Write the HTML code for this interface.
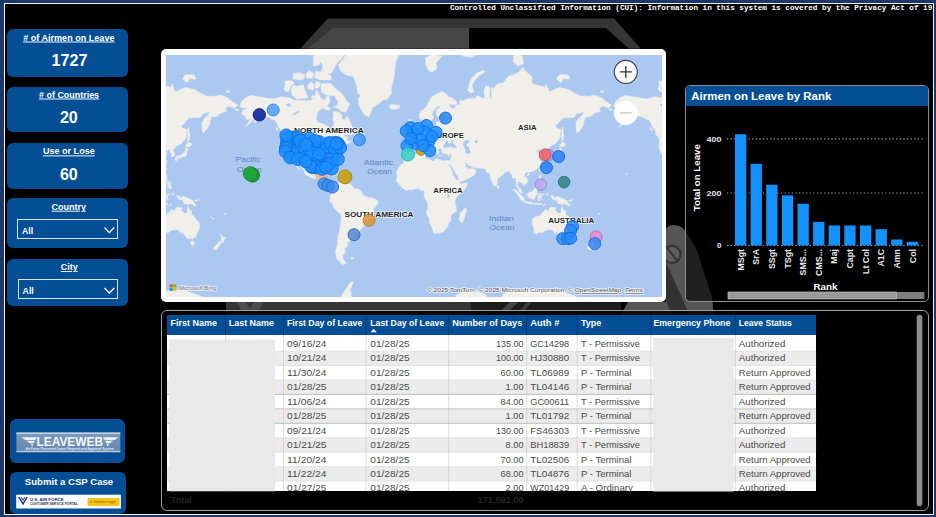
<!DOCTYPE html>
<html lang="en"><head><meta charset="utf-8"><title>Airmen on Leave Dashboard</title>
<style>
html,body{margin:0;padding:0;background:#1d3768;}
body{width:936px;height:517px;overflow:hidden;position:relative;font-family:"Liberation Sans", Arial, Helvetica, sans-serif;}
#frame{position:absolute;left:4px;top:3px;width:930px;height:512px;box-sizing:border-box;border:1px solid #eef1f6;background:#000;overflow:hidden;}
.abs{position:absolute;}
.card{position:absolute;background:#034e95;border-radius:6px;}
.sel{position:absolute;border:1px solid #d9e2ef;box-sizing:border-box;}
#ov{position:absolute;left:0;top:0;pointer-events:none;font-family:"Liberation Sans", Arial, Helvetica, sans-serif;}
svg text{white-space:pre;}
</style></head><body>
<div id="frame"></div>
<svg class="abs" style="left:0;top:0" width="936" height="517" viewBox="0 0 936 517">
<defs><filter id="bgs"><feGaussianBlur stdDeviation="0.6"/></filter></defs>
<g filter="url(#bgs)">
<polygon points="328,18.5 614,18.5 641,48.7 300,48.7" fill="#343434"/>
<polygon points="332.4,28 606,28 629,48.7 306.7,48.7" fill="#000"/>
<polygon points="332.4,28 469,28 469,48.7 306.7,48.7" fill="#454545"/>
<rect x="226" y="302" width="245" height="14" fill="#363636"/>
<rect x="471" y="302" width="150" height="14" fill="#1c1c1c"/>
<polygon points="236,302 246,302 250,309 254,302 264,302 255,316 245,316" fill="#4e4e4e"/>
<polygon points="496,316 510,302 518,302 504,316" fill="#444"/><polygon points="515,316 527,302 532,302 520,316" fill="#3a3a3a"/>
<path d="M666,229 C668,223.500 680,223.500 684.500,230 C690,238 694,244 697,251 L712,297 L714,316 L620,316 L628,302 L666,302Z" fill="#545454"/>
<polygon points="666,262 690,316 672,316 666,300" fill="#333"/>
<circle cx="672" cy="254.500" r="8.6" fill="#5e5e5e" stroke="#343434" stroke-width="2.2"/>
<path d="M667 247.500 L677.500 261" stroke="#343434" stroke-width="2"/>
</g></svg>
<div class="card" style="left:7.4px;top:29.4px;width:121.0px;height:47.6px"></div>
<div class="card" style="left:7.4px;top:86.6px;width:121.0px;height:45.7px"></div>
<div class="card" style="left:7.4px;top:143px;width:121.0px;height:46.2px"></div>
<div class="card" style="left:7.4px;top:198.1px;width:121.0px;height:50.4px"></div>
<div class="card" style="left:7.4px;top:258.5px;width:121.0px;height:47.5px"></div>
<div class="card" style="left:10px;top:419.3px;width:115.4px;height:43.5px"></div>
<div class="card" style="left:10px;top:472px;width:116.0px;height:42.0px"></div>
<div class="sel" style="left:17.4px;top:219px;width:101px;height:20px"></div>
<div class="sel" style="left:18.4px;top:279.4px;width:100px;height:20px"></div>
<div class="abs" style="left:160.6px;top:48.7px;width:505.9px;height:253.8px;background:#fff;border-radius:5px"></div>
<svg class="abs" style="left:166.0px;top:54.5px;font-family:"Liberation Sans", Arial, Helvetica, sans-serif" width="496.0" height="242.5" viewBox="0 0 496.0 242.5">
<defs><filter id="soft" x="-2%" y="-2%" width="104%" height="104%"><feGaussianBlur stdDeviation="0.7"/></filter></defs>
<rect width="496.0" height="242.5" fill="#abc8f1"/>
<g filter="url(#soft)"><path d="M73.7 51.2L75.7 46.5L79.9 42.8L85.6 40.2L92.4 41.7L101.7 43.3L107.9 43.9L115.2 41.7L119.4 42.8L123.5 42.8L128.7 45.5L136.0 45.5L144.3 45.5L147.4 44.1L149.0 41.4L150.5 34.5L152.6 38.5L154.7 42.8L158.9 45.5L160.4 41.4L163.0 41.1L164.0 46.8L162.0 49.7L158.9 51.2L157.3 53.3L153.7 54.5L151.6 57.3L150.0 63.7L152.1 67.6L156.8 68.5L159.9 70.7L162.5 71.3L163.0 74.8L164.6 77.7L166.1 76.9L166.3 72.2L168.5 68.5L166.9 64.7L167.7 60.6L167.2 56.7L171.8 56.7L175.5 59.5L176.0 64.1L178.6 65.1L181.2 61.0L183.8 66.6L185.9 71.3L189.0 74.8L190.2 76.9L187.4 78.2L185.9 79.5L179.1 79.5L176.5 83.0L179.6 81.4L181.4 81.8L180.7 84.5L182.2 86.1L184.3 86.4L185.9 85.3L184.8 87.1L181.7 88.6L179.6 89.6L180.2 87.5L178.6 87.8L175.5 89.6L174.6 91.6L175.5 92.3L171.5 93.6L171.3 95.3L169.8 97.3L169.2 98.6L169.6 100.8L167.2 102.5L164.0 105.5L163.7 107.3L165.1 110.9L164.8 112.8L163.5 112.6L162.3 109.7L160.9 107.3L158.9 106.8L155.7 106.9L155.2 108.3L153.7 108.1L150.5 107.8L147.4 109.7L147.1 112.0L146.6 116.0L148.5 119.7L150.0 120.8L152.6 120.2L154.2 117.7L157.8 117.1L157.3 120.4L156.3 123.2L158.9 123.3L161.7 124.2L161.2 126.9L161.5 129.0L163.5 130.6L165.6 130.1L167.7 130.9L167.3 132.3L165.1 132.4L162.0 131.3L159.2 129.6L157.3 126.4L153.7 125.3L150.5 122.9L147.4 123.4L144.3 122.1L139.6 119.6L138.6 118.2L138.8 116.6L137.0 114.0L134.4 111.2L131.3 107.9L130.3 105.5L128.9 105.1L129.0 107.3L131.1 110.3L133.4 114.0L134.4 115.4L131.8 113.4L129.5 109.9L127.9 106.9L126.5 104.3L125.1 102.4L122.9 101.8L121.5 98.8L120.9 97.5L119.4 94.2L119.1 90.4L119.4 85.8L118.7 82.4L120.4 82.5L120.4 81.1L116.3 78.2L114.7 74.8L112.8 72.2L111.1 68.5L109.0 65.1L105.9 64.3L102.8 62.0L98.6 61.2L94.4 61.0L90.8 63.0L91.3 59.5L88.2 63.0L85.1 67.0L82.0 70.0L78.9 71.7L80.9 69.5L84.1 65.1L84.9 64.1L79.9 64.3L79.9 61.6L76.8 59.9L75.7 58.0L77.3 55.0L80.9 54.5L80.9 52.9L76.8 52.9L73.7 51.2Z M447.7 51.2L449.7 46.5L453.9 42.8L459.6 40.2L466.4 41.7L475.7 43.3L482.0 43.9L489.2 41.7L493.4 42.8L497.5 42.8L502.7 45.5L510.0 45.5L518.3 45.5L521.4 44.1L523.0 41.4L524.5 34.5L526.6 38.5L528.7 42.8L532.9 45.5L534.4 41.4L537.0 41.1L538.0 46.8L536.0 49.7L532.9 51.2L531.3 53.3L527.7 54.5L525.6 57.3L524.0 63.7L526.1 67.6L530.8 68.5L533.9 70.7L536.5 71.3L537.0 74.8L538.6 77.7L540.1 76.9L540.3 72.2L542.5 68.5L540.9 64.7L541.7 60.6L541.2 56.7L545.8 56.7L549.5 59.5L550.0 64.1L552.6 65.1L555.2 61.0L557.8 66.6L559.9 71.3L563.0 74.8L564.2 76.9L561.4 78.2L559.9 79.5L553.1 79.5L550.5 83.0L553.6 81.4L555.4 81.8L554.7 84.5L556.2 86.1L558.3 86.4L559.9 85.3L558.8 87.1L555.7 88.6L553.6 89.6L554.2 87.5L552.6 87.8L549.5 89.6L548.6 91.6L549.5 92.3L545.5 93.6L545.3 95.3L543.8 97.3L543.2 98.6L543.6 100.8L541.2 102.5L538.0 105.5L537.7 107.3L539.1 110.9L538.8 112.8L537.5 112.6L536.3 109.7L534.9 107.3L532.9 106.8L529.7 106.9L529.2 108.3L527.7 108.1L524.5 107.8L521.4 109.7L521.1 112.0L520.6 116.0L522.5 119.7L524.0 120.8L526.6 120.2L528.2 117.7L531.8 117.1L531.3 120.4L530.3 123.2L532.9 123.3L535.7 124.2L535.2 126.9L535.5 129.0L537.5 130.6L539.6 130.1L541.7 130.9L541.3 132.3L539.1 132.4L536.0 131.3L533.2 129.6L531.3 126.4L527.7 125.3L524.5 122.9L521.4 123.4L518.3 122.1L513.6 119.6L512.6 118.2L512.8 116.6L511.0 114.0L508.4 111.2L505.3 107.9L504.3 105.5L502.9 105.1L503.0 107.3L505.1 110.3L507.4 114.0L508.4 115.4L505.8 113.4L503.5 109.9L501.9 106.9L500.5 104.3L499.1 102.4L496.9 101.8L495.5 98.8L494.9 97.5L493.4 94.2L493.1 90.4L493.4 85.8L492.7 82.4L494.4 82.5L494.4 81.1L490.3 78.2L488.7 74.8L486.8 72.2L485.1 68.5L483.0 65.1L479.9 64.3L476.8 62.0L472.6 61.2L468.4 61.0L464.8 63.0L465.3 59.5L462.2 63.0L459.1 67.0L456.0 70.0L452.9 71.7L454.9 69.5L458.1 65.1L458.9 64.1L453.9 64.3L453.9 61.6L450.8 59.9L449.7 58.0L451.3 55.0L454.9 54.5L454.9 52.9L450.8 52.9L447.7 51.2Z M179.6 57.5L174.4 55.7L171.3 52.9L167.2 52.4L171.3 50.3L172.4 46.8L168.2 40.5L163.0 40.5L159.4 39.4L155.2 37.0L155.2 29.0L159.9 28.3L165.1 28.6L167.2 31.3L171.3 34.9L175.5 38.5L178.1 41.9L181.7 47.3L184.3 48.8L182.2 52.1L180.7 55.3L179.6 57.5Z M142.2 42.8L136.0 43.6L130.8 44.1L126.6 40.5L125.1 35.5L126.6 30.6L131.8 31.3L137.0 29.6L139.6 37.0L142.2 42.8Z M117.8 33.9L120.4 36.7L123.2 35.5L124.6 31.3L127.7 28.6L126.6 26.1L122.5 25.4L118.9 26.5L119.4 30.6L117.8 33.9Z M491.8 33.9L494.4 36.7L497.2 35.5L498.6 31.3L501.7 28.6L500.6 26.1L496.5 25.4L492.9 26.5L493.4 30.6L491.8 33.9Z M126.6 23.6L133.9 25.1L138.1 23.6L138.6 19.7L133.9 17.7L127.7 18.5L126.6 23.6Z M140.2 22.8L146.4 23.6L147.9 18.5L143.3 15.6L140.2 18.5Z M142.2 33.9L147.4 34.9L147.9 29.0L144.8 27.2L141.7 30.0Z M149.0 32.9L152.6 32.9L154.7 27.9L150.5 26.5L149.0 29.6Z M148.5 22.4L154.7 25.1L165.1 24.7L165.1 20.9L156.8 16.9L149.5 16.4Z M154.7 18.5L165.1 18.5L168.2 13.4L170.3 8.8L175.5 3.9L180.7 -4.4L185.9 -14.0L170.3 -21.4L154.7 -10.7L152.6 1.2L156.8 11.2L154.7 18.5Z M147.4 11.2L152.6 9.8L156.8 3.9L152.6 -6.2L147.4 1.2L147.4 11.2Z M157.8 53.7L160.9 55.0L164.6 54.5L163.5 52.5L160.4 50.7L157.8 53.7Z M144.8 42.8L148.5 43.9L149.0 41.4L146.4 40.0L144.8 42.8Z M203.0 61.8L198.3 59.5L195.2 54.5L192.6 49.3L192.6 42.8L195.2 40.5L191.6 38.5L191.1 32.3L187.9 21.7L179.6 19.7L174.4 15.6L172.4 9.8L177.6 3.9L182.8 -7.5L201.4 -21.4L222.2 -17.6L235.7 -7.5L229.5 7.4L228.5 17.7L227.4 25.4L225.3 32.3L225.3 39.1L221.2 44.1L217.0 45.0L213.9 48.1L209.8 50.7L206.6 52.1L205.6 55.3L204.0 59.5L203.0 61.8Z M223.3 51.2L225.3 49.5L229.5 49.9L233.1 50.3L234.2 52.1L232.6 53.3L229.0 54.6L224.8 53.8L223.3 51.2Z M186.7 83.6L188.5 79.8L190.5 77.2L191.1 80.2L192.6 81.0L193.5 83.8L192.1 84.8L190.2 84.5L186.7 83.6Z M114.9 78.5L118.3 79.5L120.0 82.4L117.8 81.8L114.9 78.5Z M488.9 78.5L492.3 79.5L494.0 82.4L491.8 81.8L488.9 78.5Z M110.0 72.7L111.4 73.1L112.1 76.2L110.5 74.8Z M484.0 72.7L485.4 73.1L486.1 76.2L484.5 74.8Z M87.7 66.6L89.8 65.1L90.3 66.8L88.2 68.0Z M461.7 66.6L463.8 65.1L464.3 66.8L462.2 68.0Z M68.5 54.1L71.6 54.1L72.6 55.3L70.0 55.2Z M442.5 54.1L445.6 54.1L446.6 55.3L444.0 55.2Z M159.9 116.7L162.0 115.4L164.6 115.3L168.2 117.0L171.1 118.6L167.7 118.9L167.2 118.1L164.6 116.7L163.0 116.0L160.9 116.6L159.9 116.7Z M170.9 120.5L172.4 118.9L175.5 119.0L177.1 120.3L175.0 120.8L173.9 121.3L172.9 120.8L170.9 120.5Z M166.9 120.5L168.9 120.7L168.7 121.2L167.2 121.2Z M178.4 120.4L179.9 120.5L179.8 121.1L178.4 121.0Z M167.7 130.9L169.8 128.8L172.9 127.9L173.9 127.0L175.5 128.0L177.6 129.0L181.7 129.2L183.8 128.8L185.9 131.1L189.0 133.8L192.1 134.0L194.7 135.4L196.3 138.4L196.3 140.0L198.3 140.7L202.0 142.6L205.6 143.0L208.2 143.8L211.5 145.4L212.0 147.8L209.8 151.5L207.9 153.6L207.7 157.9L206.1 161.8L205.6 163.4L203.0 164.6L199.9 165.7L197.8 168.0L197.6 170.9L195.2 173.9L192.6 177.6L189.5 178.6L187.6 177.6L189.0 180.8L187.9 183.1L183.8 184.1L183.5 186.8L180.7 186.8L182.0 189.1L180.4 192.5L178.1 193.9L179.8 196.2L176.5 201.0L177.1 204.1L180.5 208.2L177.0 209.6L174.4 207.3L171.3 204.3L169.8 200.2L169.6 195.2L171.6 190.3L171.5 187.5L171.8 181.4L173.7 176.4L173.9 172.7L175.0 166.8L175.2 159.5L172.9 157.6L169.0 154.5L168.0 152.6L166.1 148.3L163.7 146.2L163.7 144.5L165.1 143.4L164.2 142.3L165.0 139.5L166.1 138.4L167.7 135.8L167.8 132.9L167.3 132.2Z M184.8 202.6L187.9 202.5L187.4 203.8L185.3 203.8Z M242.1 100.1L246.1 100.9L251.3 98.7L258.6 98.2L259.6 101.1L258.8 102.4L260.1 103.4L264.0 104.5L267.9 106.8L269.0 105.5L269.0 103.9L272.1 104.0L274.2 105.2L278.3 106.1L280.4 105.4L282.0 105.9L283.7 105.7L282.1 107.4L283.5 110.9L285.1 114.3L286.8 117.7L287.0 120.1L289.2 123.7L293.1 126.7L293.2 128.0L294.9 129.0L298.1 128.3L301.4 127.7L301.0 130.1L299.1 133.8L296.0 137.4L291.8 141.0L290.0 142.9L288.9 146.8L289.2 149.4L290.4 153.1L290.4 156.3L286.4 159.0L284.6 161.2L285.1 165.5L282.3 168.0L282.0 170.9L279.9 173.9L276.8 177.0L274.2 177.6L269.0 178.6L267.3 177.8L266.9 175.1L265.3 171.0L263.8 168.0L263.3 164.0L260.7 159.0L260.5 156.3L262.2 153.1L262.0 149.4L260.9 146.2L259.6 144.2L257.9 141.0L258.1 139.0L258.3 136.4L257.2 135.3L255.0 135.5L252.9 133.4L250.3 133.4L246.6 134.8L245.1 134.8L243.3 134.6L240.4 135.4L238.5 134.3L236.3 132.9L234.5 130.9L232.6 128.5L230.7 126.9L230.0 124.6L231.1 123.2L231.3 119.9L230.5 117.7L231.6 114.9L233.1 112.0L234.7 109.9L237.8 107.9L238.1 105.5L239.4 103.3L241.1 102.4L242.1 100.1Z M299.4 152.6L300.5 156.3L299.6 158.5L297.9 164.6L297.0 166.8L294.9 167.4L293.6 165.1L293.2 162.9L294.2 161.2L293.9 158.5L296.0 156.6L298.1 154.2L299.4 152.6Z M-135.2 98.6L-135.7 96.2L-134.9 92.5L-135.5 90.4L-134.1 89.4L-129.4 89.7L-127.4 89.9L-127.0 86.8L-128.1 84.5L-130.5 83.3L-130.7 82.2L-127.4 81.9L-127.6 80.3L-125.6 80.6L-124.1 78.4L-122.2 77.5L-120.9 74.8L-118.5 74.0L-116.8 73.3L-117.0 70.4L-117.3 67.6L-114.9 66.2L-114.9 69.5L-115.4 71.3L-114.4 73.1L-111.3 73.1L-106.6 71.8L-105.3 72.4L-104.0 70.7L-103.9 67.6L-102.9 66.4L-100.6 67.2L-101.4 64.3L-101.4 63.0L-96.7 62.2L-94.6 61.6L-96.2 60.6L-99.8 61.2L-102.4 61.6L-103.7 59.5L-103.5 55.3L-99.8 52.1L-100.7 50.7L-102.9 51.2L-103.7 53.3L-107.1 56.3L-107.8 59.5L-106.3 62.0L-107.0 63.0L-108.7 66.6L-109.2 69.1L-110.9 70.4L-112.4 70.4L-112.6 68.9L-114.1 64.7L-114.7 63.0L-115.9 64.1L-118.5 65.6L-120.1 63.7L-120.6 59.5L-119.0 55.9L-115.9 54.0L-113.3 51.2L-111.3 46.8L-109.2 43.3L-106.1 40.5L-101.9 38.5L-99.1 36.7L-96.2 37.6L-93.6 39.4L-91.5 41.7L-87.4 43.3L-83.2 46.8L-83.7 49.7L-89.4 49.3L-91.5 48.6L-90.0 52.1L-87.4 53.7L-84.2 52.5L-84.2 49.9L-80.1 49.9L-80.1 44.7L-77.5 46.0L-70.2 43.3L-64.5 43.3L-62.9 40.8L-58.3 42.8L-54.6 43.6L-56.2 37.0L-54.1 30.6L-50.2 32.3L-50.5 40.0L-49.4 45.5L-48.4 41.4L-48.9 32.3L-46.8 33.9L-42.7 29.0L-36.5 27.9L-32.3 21.7L-21.9 17.7L-17.4 12.5L-13.6 16.9L-7.9 21.7L-8.4 28.3L-1.1 30.6L5.1 32.3L6.1 29.0L9.3 37.0L12.4 35.5L19.6 32.3L30.0 35.2L32.6 37.3L40.4 41.1L42.5 41.1L50.8 41.4L51.8 40.0L57.0 40.8L61.2 42.8L66.4 46.8L71.6 50.1L69.0 53.0L63.3 51.2L59.1 52.5L60.7 56.3L55.0 57.8L50.8 61.6L45.6 62.0L44.1 65.6L43.5 69.1L42.5 71.7L40.4 74.8L37.0 78.2L36.1 74.0L36.0 67.6L38.3 63.7L42.0 60.6L44.1 56.3L40.4 58.0L36.8 58.4L34.2 62.6L30.0 62.6L22.8 63.0L19.6 66.6L15.0 71.8L17.6 73.4L21.0 74.5L20.2 78.2L20.2 82.2L18.1 85.3L15.0 89.0L11.3 90.4L10.0 91.4L8.9 93.2L6.7 95.3L8.5 97.9L8.6 100.5L5.6 101.9L5.6 98.6L4.1 97.3L4.3 95.1L3.3 94.6L0.6 95.9L0.6 93.5L-2.2 95.7L-3.5 96.3L-2.2 98.2L1.5 98.3L-1.7 100.9L-0.3 104.3L0.8 106.1L0.6 109.1L-1.4 112.4L-3.7 114.5L-7.2 116.2L-11.0 117.3L-11.5 118.5L-12.0 117.1L-13.6 117.1L-15.7 119.3L-15.0 121.5L-12.8 123.7L-12.1 126.9L-14.6 129.0L-16.7 130.9L-16.9 129.3L-19.3 127.4L-21.0 126.0L-21.9 127.4L-22.6 130.1L-21.4 132.5L-19.3 134.0L-18.3 136.4L-17.5 138.5L-18.5 138.3L-20.6 136.9L-21.6 134.3L-23.5 131.7L-23.5 129.0L-24.0 125.8L-24.4 122.6L-26.6 123.4L-27.8 123.0L-27.8 120.4L-29.9 117.7L-30.7 115.8L-33.3 116.7L-35.4 117.5L-35.9 118.8L-37.7 119.9L-40.3 122.4L-42.5 123.7L-42.5 126.4L-42.9 129.2L-44.6 130.7L-45.3 131.6L-46.5 129.6L-48.1 126.4L-49.4 123.2L-50.2 119.9L-50.3 117.7L-52.6 117.9L-54.1 116.3L-53.1 115.4L-54.9 114.6L-56.2 113.4L-61.4 112.9L-66.3 112.5L-67.1 110.9L-69.7 111.3L-72.3 109.9L-73.9 107.3L-75.4 107.3L-73.9 111.2L-73.5 113.5L-72.3 112.0L-72.3 113.7L-69.7 114.1L-67.5 111.9L-66.9 114.0L-64.7 114.9L-63.7 116.1L-65.8 119.9L-68.7 122.1L-71.8 123.6L-75.4 125.3L-79.1 126.6L-80.6 126.7L-81.4 124.2L-81.4 122.6L-83.7 119.3L-85.2 117.1L-86.8 114.0L-89.4 109.7L-89.5 107.9L-90.3 109.9L-91.5 108.5L-91.9 107.4L-92.2 105.9L-90.3 105.7L-89.4 103.6L-88.5 100.9L-88.4 99.0L-91.5 99.6L-94.0 98.8L-96.7 99.0L-97.4 98.6L-98.5 95.9L-98.6 94.5L-95.7 93.1L-93.1 92.9L-89.4 91.8L-85.8 93.2L-82.7 92.5L-84.8 89.7L-86.8 88.0L-87.0 87.1L-85.1 84.2L-89.2 85.8L-89.4 86.8L-88.0 87.2L-90.8 88.4L-91.9 86.9L-91.0 85.9L-93.6 85.2L-94.9 87.2L-96.2 89.7L-96.7 91.8L-96.0 92.9L-98.6 93.5L-100.9 93.5L-101.9 94.2L-102.1 95.5L-100.9 97.0L-101.9 99.2L-103.5 98.6L-104.0 96.6L-105.5 94.2L-105.5 92.1L-106.6 91.1L-109.7 89.0L-111.0 87.2L-111.6 86.7L-113.0 87.1L-112.8 89.0L-111.3 91.4L-109.2 92.1L-106.6 94.3L-108.1 93.9L-108.7 95.3L-108.1 95.9L-109.2 97.3L-109.5 94.6L-111.0 93.5L-113.0 92.3L-114.9 90.4L-116.7 88.4L-118.2 89.4L-120.6 89.9L-122.5 90.1L-122.5 92.1L-125.1 93.6L-126.1 95.5L-125.6 96.3L-126.5 97.8L-128.1 98.8L-130.5 99.0L-131.6 99.9L-132.3 99.0L-133.5 98.3L-135.2 98.6Z M238.8 98.6L238.3 96.2L239.1 92.5L238.5 90.4L239.9 89.4L244.6 89.7L246.6 89.9L247.0 86.8L245.9 84.5L243.5 83.3L243.3 82.2L246.6 81.9L246.4 80.3L248.4 80.6L249.9 78.4L251.8 77.5L253.1 74.8L255.5 74.0L257.2 73.3L257.0 70.4L256.7 67.6L259.1 66.2L259.1 69.5L258.6 71.3L259.6 73.1L262.7 73.1L267.4 71.8L268.7 72.4L270.0 70.7L270.1 67.6L271.1 66.4L273.4 67.2L272.6 64.3L272.6 63.0L277.3 62.2L279.4 61.6L277.8 60.6L274.2 61.2L271.6 61.6L270.3 59.5L270.5 55.3L274.2 52.1L273.3 50.7L271.1 51.2L270.3 53.3L266.9 56.3L266.2 59.5L267.7 62.0L267.0 63.0L265.3 66.6L264.8 69.1L263.1 70.4L261.6 70.4L261.4 68.9L259.9 64.7L259.3 63.0L258.1 64.1L255.5 65.6L253.9 63.7L253.4 59.5L255.0 55.9L258.1 54.0L260.7 51.2L262.7 46.8L264.8 43.3L267.9 40.5L272.1 38.5L274.9 36.7L277.8 37.6L280.4 39.4L282.5 41.7L286.6 43.3L290.8 46.8L290.3 49.7L284.6 49.3L282.5 48.6L284.0 52.1L286.6 53.7L289.8 52.5L289.8 49.9L293.9 49.9L293.9 44.7L296.5 46.0L303.8 43.3L309.5 43.3L311.1 40.8L315.7 42.8L319.4 43.6L317.8 37.0L319.9 30.6L323.8 32.3L323.5 40.0L324.6 45.5L325.6 41.4L325.1 32.3L327.2 33.9L331.3 29.0L337.5 27.9L341.7 21.7L352.1 17.7L356.6 12.5L360.4 16.9L366.1 21.7L365.6 28.3L372.9 30.6L379.1 32.3L380.1 29.0L383.3 37.0L386.4 35.5L393.6 32.3L404.0 35.2L406.6 37.3L414.4 41.1L416.5 41.1L424.8 41.4L425.9 40.0L431.0 40.8L435.2 42.8L440.4 46.8L445.6 50.1L443.0 53.0L437.3 51.2L433.1 52.5L434.7 56.3L429.0 57.8L424.8 61.6L419.6 62.0L418.1 65.6L417.5 69.1L416.5 71.7L414.4 74.8L411.0 78.2L410.1 74.0L410.0 67.6L412.3 63.7L416.0 60.6L418.1 56.3L414.4 58.0L410.8 58.4L408.2 62.6L404.0 62.6L396.8 63.0L393.6 66.6L389.0 71.8L391.6 73.4L395.0 74.5L394.2 78.2L394.2 82.2L392.1 85.3L389.0 89.0L385.3 90.4L384.0 91.4L382.9 93.2L380.7 95.3L382.5 97.9L382.6 100.5L379.6 101.9L379.6 98.6L378.1 97.3L378.3 95.1L377.3 94.6L374.6 95.9L374.6 93.5L371.8 95.7L370.5 96.3L371.8 98.2L375.5 98.3L372.3 100.9L373.7 104.3L374.8 106.1L374.6 109.1L372.6 112.4L370.3 114.5L366.8 116.2L363.0 117.3L362.5 118.5L362.0 117.1L360.4 117.1L358.3 119.3L359.0 121.5L361.2 123.7L361.9 126.9L359.4 129.0L357.3 130.9L357.1 129.3L354.7 127.4L353.0 126.0L352.1 127.4L351.4 130.1L352.6 132.5L354.7 134.0L355.7 136.4L356.5 138.5L355.5 138.3L353.4 136.9L352.4 134.3L350.5 131.7L350.5 129.0L350.0 125.8L349.6 122.6L347.4 123.4L346.2 123.0L346.2 120.4L344.1 117.7L343.3 115.8L340.7 116.7L338.6 117.5L338.1 118.8L336.3 119.9L333.7 122.4L331.5 123.7L331.5 126.4L331.1 129.2L329.4 130.7L328.7 131.6L327.5 129.6L325.9 126.4L324.6 123.2L323.8 119.9L323.7 117.7L321.4 117.9L319.9 116.3L320.9 115.4L319.1 114.6L317.8 113.4L312.6 112.9L307.7 112.5L306.9 110.9L304.3 111.3L301.7 109.9L300.1 107.3L298.6 107.3L300.1 111.2L300.5 113.5L301.7 112.0L301.7 113.7L304.3 114.1L306.5 111.9L307.1 114.0L309.3 114.9L310.3 116.1L308.2 119.9L305.3 122.1L302.2 123.6L298.6 125.3L294.9 126.6L293.4 126.7L292.6 124.2L292.6 122.6L290.3 119.3L288.8 117.1L287.2 114.0L284.6 109.7L284.5 107.9L283.7 109.9L282.5 108.5L282.1 107.4L281.8 105.9L283.7 105.7L284.6 103.6L285.5 100.9L285.6 99.0L282.5 99.6L280.0 98.8L277.3 99.0L276.6 98.6L275.5 95.9L275.4 94.5L278.3 93.1L280.9 92.9L284.6 91.8L288.2 93.2L291.3 92.5L289.2 89.7L287.2 88.0L287.0 87.1L288.9 84.2L284.8 85.8L284.6 86.8L286.0 87.2L283.2 88.4L282.1 86.9L283.0 85.9L280.4 85.2L279.1 87.2L277.8 89.7L277.3 91.8L278.0 92.9L275.4 93.5L273.1 93.5L272.1 94.2L271.9 95.5L273.1 97.0L272.1 99.2L270.5 98.6L270.0 96.6L268.5 94.2L268.5 92.1L267.4 91.1L264.3 89.0L263.0 87.2L262.4 86.7L261.0 87.1L261.2 89.0L262.7 91.4L264.8 92.1L267.4 94.3L265.9 93.9L265.3 95.3L265.9 95.9L264.8 97.3L264.5 94.6L263.0 93.5L261.0 92.3L259.1 90.4L257.3 88.4L255.8 89.4L253.4 89.9L251.5 90.1L251.5 92.1L248.9 93.6L247.9 95.5L248.4 96.3L247.5 97.8L245.9 98.8L243.5 99.0L242.4 99.9L241.7 99.0L240.5 98.3L238.8 98.6Z M242.3 79.7L245.1 78.9L249.7 77.9L250.0 75.3L248.4 74.0L246.6 71.3L246.1 69.5L246.1 66.6L244.6 66.2L244.9 64.5L243.0 64.5L242.0 67.6L242.5 70.4L243.2 71.7L245.1 73.1L245.1 74.1L243.5 74.5L243.8 76.0L242.8 76.9L244.9 77.5L243.5 78.2L242.3 79.7Z M237.8 77.2L241.7 76.2L242.0 74.0L242.5 72.2L241.4 70.9L239.6 71.1L237.8 72.7L238.3 74.5L237.5 76.2L237.8 77.2Z M262.7 15.6L265.9 17.3L271.1 13.4L270.0 7.9L276.2 1.2L266.9 -0.4L259.6 2.8L259.6 8.8L262.7 15.6Z M301.7 35.5L305.3 37.9L307.9 37.0L305.9 30.6L308.5 25.4L313.6 20.5L319.4 16.4L316.8 15.6L310.5 18.5L305.9 22.8L303.3 29.0L301.7 35.5Z M297.0 1.2L305.3 2.3L312.6 -1.5L308.5 -7.5L298.1 -4.4Z M346.9 6.4L352.1 11.2L357.3 8.8L356.2 1.2L349.0 -4.4Z M16.5 23.6L20.7 27.9L23.8 23.6L30.0 24.3L28.0 19.7L19.6 19.7Z M390.5 23.6L394.7 27.9L397.8 23.6L404.0 24.3L402.0 19.7L393.6 19.7Z M59.6 37.0L63.3 35.5L63.8 37.0L61.2 37.6Z M433.6 37.0L437.3 35.5L437.8 37.0L435.2 37.6Z M261.2 97.3L264.3 97.0L263.9 99.0L261.2 97.8Z M256.7 93.2L258.3 93.2L258.2 95.8L256.9 95.9Z M257.1 90.6L258.1 90.4L258.0 92.5L257.2 92.4Z M272.6 100.4L275.5 100.8L275.4 101.1L272.7 100.9Z M281.8 101.1L284.1 100.2L283.5 101.3L282.0 101.6Z M10.2 102.4L11.9 102.2L14.4 101.6L15.3 103.0L16.5 101.6L18.4 101.5L19.4 101.1L20.6 100.2L20.7 96.9L21.7 95.0L21.1 92.7L19.6 93.9L19.4 95.9L18.1 98.1L16.5 98.6L16.3 98.1L15.5 99.9L14.8 100.4L12.4 100.5L10.3 101.8L10.2 102.4Z M384.2 102.4L385.9 102.2L388.5 101.6L389.3 103.0L390.5 101.6L392.4 101.5L393.4 101.1L394.6 100.2L394.7 96.9L395.7 95.0L395.1 92.7L393.6 93.9L393.4 95.9L392.1 98.1L390.5 98.6L390.3 98.1L389.5 99.9L388.8 100.4L386.4 100.5L384.3 101.8L384.2 102.4Z M10.3 102.5L11.3 103.3L10.8 105.5L9.8 105.9L9.3 104.0L8.9 103.3L9.8 102.7Z M384.3 102.5L385.3 103.3L384.8 105.5L383.8 105.9L383.3 104.0L382.9 103.3L383.8 102.7Z M11.9 102.5L13.9 102.0L13.7 103.0L12.4 103.9L11.7 103.3Z M385.9 102.5L387.9 102.0L387.7 103.0L386.4 103.9L385.7 103.3Z M19.6 92.5L20.7 91.1L23.0 91.8L25.4 90.1L25.2 88.6L21.7 86.8L21.4 89.0L20.0 90.0L19.6 92.5Z M393.6 92.5L394.7 91.1L397.0 91.8L399.4 90.1L399.2 88.6L395.7 86.8L395.4 89.0L394.0 90.0L393.6 92.5Z M21.7 86.1L23.3 84.8L22.8 81.4L24.3 81.1L23.1 77.4L22.8 72.6L22.2 72.6L21.7 76.5L21.7 81.4L21.7 86.1Z M395.7 86.1L397.3 84.8L396.8 81.4L398.3 81.1L397.1 77.4L396.8 72.6L396.2 72.6L395.7 76.5L395.7 81.4L395.7 86.1Z M-0.1 112.9L0.9 113.2L-0.3 116.6L-1.0 115.4L-0.1 112.9Z M373.9 112.9L374.9 113.2L373.7 116.6L373.0 115.4L373.9 112.9Z M361.1 119.6L363.0 118.7L363.5 119.2L362.2 120.7L361.1 120.3Z M-0.6 120.4L1.2 120.4L0.9 122.8L0.4 125.0L3.0 126.4L2.5 126.9L-0.5 125.5L-1.1 123.2L-0.6 120.4Z M373.4 120.4L375.2 120.4L374.9 122.8L374.4 125.0L377.0 126.4L376.5 126.9L373.5 125.5L372.9 123.2L373.4 120.4Z M0.9 132.7L2.5 130.9L4.6 129.8L5.6 132.2L4.6 134.1L3.0 132.7L0.9 132.7Z M374.9 132.7L376.5 130.9L378.6 129.8L379.6 132.2L378.6 134.1L377.0 132.7L374.9 132.7Z M0.9 127.7L2.5 127.9L4.6 126.9L4.6 129.3L2.5 130.1L1.5 129.6Z M374.9 127.7L376.5 127.9L378.6 126.9L378.6 129.3L376.5 130.1L375.5 129.6Z M-4.0 131.2L-1.7 128.1L-1.2 128.4L-3.4 131.5Z M370.0 131.2L372.3 128.1L372.8 128.4L370.6 131.5Z M361.4 138.4L362.5 138.1L364.0 137.1L365.6 136.7L367.7 134.8L369.4 132.7L370.5 133.3L371.8 134.6L370.8 135.5L370.6 137.4L371.8 139.0L370.3 140.0L369.2 141.6L368.7 143.8L367.2 144.2L364.6 143.4L362.7 143.0L361.4 140.5L361.4 138.4Z M347.2 134.2L349.5 134.6L352.5 137.6L355.7 140.8L358.3 143.1L358.1 146.1L356.8 146.0L354.5 144.2L352.4 141.0L350.7 138.2L348.5 136.2L347.2 134.2Z M357.5 147.1L358.8 146.2L360.9 146.9L363.5 146.8L367.2 148.0L367.2 149.1L363.5 148.7L360.4 148.1L357.5 147.1Z M-6.3 148.4L-2.2 148.5L2.0 148.5L2.0 149.2L-2.2 149.4L-5.3 149.4Z M367.7 148.4L371.8 148.5L376.0 148.5L376.0 149.2L371.8 149.4L368.7 149.4Z M2.5 150.8L4.1 149.6L6.1 148.8L5.6 149.4L3.5 150.7Z M376.5 150.8L378.1 149.6L380.1 148.8L379.6 149.4L377.5 150.7Z M-1.8 145.7L-0.7 145.8L-0.7 143.1L0.1 142.8L1.5 145.0L2.2 144.5L0.7 142.0L2.3 141.0L0.4 140.9L-0.6 139.7L2.0 139.6L4.3 138.3L3.5 139.6L-0.3 138.8L-1.3 139.7L-1.9 142.6L-1.8 145.7Z M372.2 145.7L373.3 145.8L373.3 143.1L374.1 142.8L375.5 145.0L376.2 144.5L374.7 142.0L376.3 141.0L374.4 140.9L373.4 139.7L376.0 139.6L378.3 138.3L377.5 139.6L373.7 138.8L372.7 139.7L372.1 142.6L372.2 145.7Z M6.7 137.7L7.8 138.4L7.4 140.8L6.8 139.5Z M380.7 137.7L381.8 138.4L381.4 140.8L380.8 139.5Z M10.3 140.8L13.4 140.8L14.4 143.4L17.0 141.6L20.7 142.7L24.8 144.5L27.4 146.2L27.7 147.8L30.6 151.0L28.0 150.7L25.9 148.9L23.3 148.9L21.7 149.6L18.6 148.4L17.9 148.7L17.4 145.7L15.0 144.7L12.4 144.2L12.2 142.9L10.3 140.8Z M384.3 140.8L387.4 140.8L388.5 143.4L391.0 141.6L394.7 142.7L398.8 144.5L401.4 146.2L401.7 147.8L404.6 151.0L402.0 150.7L399.9 148.9L397.3 148.9L395.7 149.6L392.6 148.4L391.9 148.7L391.4 145.7L389.0 144.7L386.4 144.2L386.2 142.9L384.3 140.8Z M28.5 145.7L32.1 144.4L32.4 145.2L29.5 146.6Z M402.5 145.7L406.1 144.4L406.4 145.2L403.5 146.6Z M331.3 129.9L332.6 131.1L333.2 132.7L331.9 133.8L331.1 132.7L331.3 129.9Z M-7.7 163.4L-7.2 168.0L-7.9 168.6L-6.3 172.7L-5.6 175.1L-6.3 178.0L-3.2 178.9L-1.1 177.5L2.5 177.5L5.1 175.5L8.2 174.8L10.5 174.5L13.4 176.0L15.0 178.5L17.3 176.0L17.0 179.1L18.1 178.9L19.3 180.8L20.5 182.7L23.3 183.8L24.8 183.0L26.3 184.2L28.0 182.6L30.0 181.8L30.8 178.9L31.4 177.3L32.9 174.5L33.8 170.9L33.3 168.0L31.1 165.4L29.5 163.8L27.4 160.7L25.9 159.9L25.4 155.8L23.5 155.0L22.2 151.2L21.3 153.6L21.2 156.3L20.5 158.5L18.6 158.3L16.5 156.6L15.0 155.5L15.5 152.9L16.3 152.8L14.4 152.6L12.4 152.2L11.3 151.8L10.1 153.0L9.3 154.2L8.7 155.7L7.4 155.8L6.1 154.6L4.6 155.2L3.5 156.8L2.5 158.3L1.2 158.1L1.2 159.2L0.4 160.7L-2.2 161.2L-4.5 161.9L-6.7 163.2L-7.7 163.4Z M366.3 163.4L366.8 168.0L366.1 168.6L367.7 172.7L368.4 175.1L367.7 178.0L370.8 178.9L372.9 177.5L376.5 177.5L379.1 175.5L382.2 174.8L384.5 174.5L387.4 176.0L389.0 178.5L391.3 176.0L391.0 179.1L392.1 178.9L393.3 180.8L394.5 182.7L397.3 183.8L398.8 183.0L400.3 184.2L402.0 182.6L404.0 181.8L404.8 178.9L405.4 177.3L406.9 174.5L407.8 170.9L407.3 168.0L405.1 165.4L403.5 163.8L401.4 160.7L399.9 159.9L399.4 155.8L397.5 155.0L396.2 151.2L395.3 153.6L395.2 156.3L394.5 158.5L392.6 158.3L390.5 156.6L389.0 155.5L389.5 152.9L390.3 152.8L388.5 152.6L386.4 152.2L385.3 151.8L384.1 153.0L383.3 154.2L382.7 155.7L381.4 155.8L380.1 154.6L378.6 155.2L377.5 156.8L376.5 158.3L375.2 158.1L375.2 159.2L374.4 160.7L371.8 161.2L369.5 161.9L367.3 163.2L366.3 163.4Z M24.5 186.4L28.3 186.6L28.2 188.4L27.4 190.3L25.9 190.4L25.0 188.6L24.5 186.4Z M398.5 186.4L402.3 186.6L402.2 188.4L401.4 190.3L399.9 190.4L399.0 188.6L398.5 186.4Z M53.6 178.1L55.5 180.8L56.7 181.0L57.0 182.2L59.6 182.3L59.0 184.3L58.1 184.7L57.0 187.5L56.2 187.6L55.8 186.1L54.8 184.5L55.7 183.4L55.5 181.4L53.9 178.9L53.6 178.1Z M427.6 178.1L429.5 180.8L430.7 181.0L431.0 182.2L433.6 182.3L433.0 184.3L432.1 184.7L431.0 187.5L430.2 187.6L429.8 186.1L428.8 184.5L429.7 183.4L429.5 181.4L427.9 178.9L427.6 178.1Z M53.6 186.1L55.3 187.2L53.9 189.6L53.6 190.7L52.1 191.7L51.6 193.8L50.3 194.8L48.2 194.2L47.2 193.6L49.0 191.2L51.3 189.4L52.9 187.1L53.6 186.1Z M427.6 186.1L429.3 187.2L427.9 189.6L427.6 190.7L426.1 191.7L425.6 193.8L424.3 194.8L422.2 194.2L421.2 193.6L423.0 191.2L425.3 189.4L426.9 187.1L427.6 186.1Z M44.6 161.3L47.2 163.2L47.7 163.9L45.6 162.9Z M418.6 161.3L421.2 163.2L421.7 163.9L419.6 162.9Z M58.4 158.4L59.7 158.4L59.7 159.2L58.4 159.2Z M432.4 158.4L433.7 158.4L433.7 159.2L432.4 159.2Z M86.1 118.6L87.2 119.0L86.5 119.9L86.1 119.2Z M460.1 118.6L461.2 119.0L460.5 119.9L460.1 119.2Z M187.4 227.0L185.3 226.5L183.3 229.2L180.2 233.5L177.6 237.5L173.4 244.8L185.9 244.8L184.3 234.3L186.1 230.2Z M289.8 240.3L294.9 238.1L300.1 235.9L306.4 234.8L312.6 236.9L320.9 240.3L320.9 246.4L289.8 246.4Z M-37.5 240.3L-32.3 236.4L-21.9 234.3L-11.5 234.8L-1.1 235.9L9.3 234.8L19.6 235.9L30.0 239.2L38.3 242.7L38.3 246.4L-37.5 246.4Z M336.5 240.3L341.7 236.4L352.1 234.3L362.5 234.8L372.9 235.9L383.3 234.8L393.6 235.9L404.0 239.2L412.3 242.7L412.3 246.4L336.5 246.4Z" fill="#f1efe9" stroke="#f1efe9" stroke-width="0.5" stroke-linejoin="round"/>
<path d="M297.0 87.5L300.1 85.0L303.3 85.3L303.3 87.5L301.2 88.3L300.5 91.1L303.1 91.8L303.3 94.6L304.3 95.9L304.3 98.6L301.2 99.0L299.1 97.9L299.4 94.2L297.5 91.1L297.0 87.5Z M356.2 77.2L358.3 74.8L361.4 70.4L362.3 70.2L360.4 74.3L357.3 77.4Z M281.4 139.7L283.5 139.8L283.5 142.4L281.4 142.6Z M152.6 84.8L156.8 81.8L159.9 83.3L160.2 85.2L156.8 85.0Z M156.8 92.1L158.4 92.1L159.7 86.5L157.3 86.8Z M160.4 86.2L164.0 86.1L165.1 88.0L163.3 90.3L161.5 89.0Z M161.6 92.4L166.1 90.7L165.9 89.9L168.9 89.0L168.7 89.9L165.6 90.3L165.1 91.4Z M145.3 73.4L147.4 73.4L148.2 79.0L147.2 79.0Z M119.4 49.7L123.5 48.1L125.6 50.3L122.5 52.1Z M493.4 49.7L497.5 48.1L499.6 50.3L496.5 52.1Z M126.6 59.5L130.3 56.7L133.9 55.7L132.4 57.8L128.7 59.9Z M309.0 85.3L311.6 85.3L311.6 87.8L309.0 88.3Z" fill="#abc8f1"/></g>
<text x="128.0" y="78.3" font-size="7.6" font-weight="bold" fill="#1f1f1f" textLength="69.6" lengthAdjust="spacingAndGlyphs" stroke="#fff" stroke-opacity="0.75" stroke-width="1.6" paint-order="stroke" stroke-linejoin="round" >NORTH AMERICA</text><text x="265.5" y="83.1" font-size="7.6" font-weight="bold" fill="#1f1f1f" textLength="32.3" lengthAdjust="spacingAndGlyphs" stroke="#fff" stroke-opacity="0.75" stroke-width="1.6" paint-order="stroke" stroke-linejoin="round" >EUROPE</text><text x="352.0" y="75.3" font-size="7.6" font-weight="bold" fill="#1f1f1f" textLength="18.5" lengthAdjust="spacingAndGlyphs" stroke="#fff" stroke-opacity="0.75" stroke-width="1.6" paint-order="stroke" stroke-linejoin="round" >ASIA</text><text x="267.3" y="137.8" font-size="7.6" font-weight="bold" fill="#1f1f1f" textLength="29.3" lengthAdjust="spacingAndGlyphs" stroke="#fff" stroke-opacity="0.75" stroke-width="1.6" paint-order="stroke" stroke-linejoin="round" >AFRICA</text><text x="178.5" y="161.5" font-size="7.6" font-weight="bold" fill="#1f1f1f" textLength="69" lengthAdjust="spacingAndGlyphs" stroke="#fff" stroke-opacity="0.75" stroke-width="1.6" paint-order="stroke" stroke-linejoin="round" >SOUTH AMERICA</text><text x="382.3" y="168.1" font-size="7.6" font-weight="bold" fill="#1f1f1f" textLength="46" lengthAdjust="spacingAndGlyphs" stroke="#fff" stroke-opacity="0.75" stroke-width="1.6" paint-order="stroke" stroke-linejoin="round" >AUSTRALIA</text><text x="82.1" y="107.1" font-size="7.5" font-weight="normal" fill="#5f83c4" text-anchor="middle" textLength="24.8" lengthAdjust="spacingAndGlyphs" >Pacific</text><text x="83.4" y="116.9" font-size="7.5" font-weight="normal" fill="#5f83c4" text-anchor="middle" textLength="24.8" lengthAdjust="spacingAndGlyphs" >Ocean</text><text x="212.5" y="109.9" font-size="7.5" font-weight="normal" fill="#5f83c4" text-anchor="middle" textLength="29.6" lengthAdjust="spacingAndGlyphs" >Atlantic</text><text x="213.6" y="119.4" font-size="7.5" font-weight="normal" fill="#5f83c4" text-anchor="middle" textLength="24.8" lengthAdjust="spacingAndGlyphs" >Ocean</text><text x="335.4" y="166.2" font-size="7.5" font-weight="normal" fill="#5f83c4" text-anchor="middle" textLength="25.2" lengthAdjust="spacingAndGlyphs" >Indian</text><text x="336.0" y="175.1" font-size="7.5" font-weight="normal" fill="#5f83c4" text-anchor="middle" textLength="24.9" lengthAdjust="spacingAndGlyphs" >Ocean</text>
<circle cx="155.8" cy="119.1" r="6" fill="#f4b58a" fill-opacity="0.9" stroke="#e59a6a" stroke-width="0.9"/><circle cx="149.7" cy="91.5" r="6.3" fill="#1c8dff" fill-opacity="0.88" stroke="#0b6fe0" stroke-width="0.9"/><circle cx="122.1" cy="85.1" r="6.3" fill="#1c8dff" fill-opacity="0.88" stroke="#0b6fe0" stroke-width="0.9"/><circle cx="152.5" cy="92.9" r="6.3" fill="#1c8dff" fill-opacity="0.88" stroke="#0b6fe0" stroke-width="0.9"/><circle cx="171.4" cy="88.1" r="6.3" fill="#1c8dff" fill-opacity="0.88" stroke="#0b6fe0" stroke-width="0.9"/><circle cx="125.9" cy="101.2" r="6.3" fill="#1c8dff" fill-opacity="0.88" stroke="#0b6fe0" stroke-width="0.9"/><circle cx="156.6" cy="91.8" r="6.3" fill="#1c8dff" fill-opacity="0.88" stroke="#0b6fe0" stroke-width="0.9"/><circle cx="159.4" cy="94.3" r="6.3" fill="#1c8dff" fill-opacity="0.88" stroke="#0b6fe0" stroke-width="0.9"/><circle cx="134.8" cy="101.3" r="6.3" fill="#1c8dff" fill-opacity="0.88" stroke="#0b6fe0" stroke-width="0.9"/><circle cx="144.2" cy="88.5" r="6.3" fill="#1c8dff" fill-opacity="0.88" stroke="#0b6fe0" stroke-width="0.9"/><circle cx="167.1" cy="106.4" r="6.3" fill="#1c8dff" fill-opacity="0.88" stroke="#0b6fe0" stroke-width="0.9"/><circle cx="130.1" cy="100.8" r="6.3" fill="#1c8dff" fill-opacity="0.88" stroke="#0b6fe0" stroke-width="0.9"/><circle cx="162.7" cy="88.0" r="6.3" fill="#1c8dff" fill-opacity="0.88" stroke="#0b6fe0" stroke-width="0.9"/><circle cx="123.9" cy="97.0" r="6.3" fill="#1c8dff" fill-opacity="0.88" stroke="#0b6fe0" stroke-width="0.9"/><circle cx="165.1" cy="100.8" r="6.3" fill="#1c8dff" fill-opacity="0.88" stroke="#0b6fe0" stroke-width="0.9"/><circle cx="172.5" cy="89.2" r="6.3" fill="#1c8dff" fill-opacity="0.88" stroke="#0b6fe0" stroke-width="0.9"/><circle cx="160.4" cy="101.7" r="6.3" fill="#1c8dff" fill-opacity="0.88" stroke="#0b6fe0" stroke-width="0.9"/><circle cx="152.7" cy="95.5" r="6.3" fill="#1c8dff" fill-opacity="0.88" stroke="#0b6fe0" stroke-width="0.9"/><circle cx="145.6" cy="104.9" r="6.3" fill="#1c8dff" fill-opacity="0.88" stroke="#0b6fe0" stroke-width="0.9"/><circle cx="168.9" cy="87.8" r="6.3" fill="#1c8dff" fill-opacity="0.88" stroke="#0b6fe0" stroke-width="0.9"/><circle cx="139.6" cy="105.1" r="6.3" fill="#1c8dff" fill-opacity="0.88" stroke="#0b6fe0" stroke-width="0.9"/><circle cx="122.4" cy="86.2" r="6.3" fill="#1c8dff" fill-opacity="0.88" stroke="#0b6fe0" stroke-width="0.9"/><circle cx="132.4" cy="93.7" r="6.3" fill="#1c8dff" fill-opacity="0.88" stroke="#0b6fe0" stroke-width="0.9"/><circle cx="125.6" cy="85.5" r="6.3" fill="#1c8dff" fill-opacity="0.88" stroke="#0b6fe0" stroke-width="0.9"/><circle cx="129.4" cy="96.8" r="6.3" fill="#1c8dff" fill-opacity="0.88" stroke="#0b6fe0" stroke-width="0.9"/><circle cx="153.3" cy="86.9" r="6.3" fill="#1c8dff" fill-opacity="0.88" stroke="#0b6fe0" stroke-width="0.9"/><circle cx="138.5" cy="100.5" r="6.3" fill="#1c8dff" fill-opacity="0.88" stroke="#0b6fe0" stroke-width="0.9"/><circle cx="148.3" cy="102.8" r="6.3" fill="#1c8dff" fill-opacity="0.88" stroke="#0b6fe0" stroke-width="0.9"/><circle cx="140.1" cy="93.0" r="6.3" fill="#1c8dff" fill-opacity="0.88" stroke="#0b6fe0" stroke-width="0.9"/><circle cx="127.8" cy="82.4" r="6.3" fill="#1c8dff" fill-opacity="0.88" stroke="#0b6fe0" stroke-width="0.9"/><circle cx="120.6" cy="91.4" r="6.3" fill="#1c8dff" fill-opacity="0.88" stroke="#0b6fe0" stroke-width="0.9"/><circle cx="130.7" cy="90.7" r="6.3" fill="#1c8dff" fill-opacity="0.88" stroke="#0b6fe0" stroke-width="0.9"/><circle cx="145.0" cy="96.8" r="6.3" fill="#1c8dff" fill-opacity="0.88" stroke="#0b6fe0" stroke-width="0.9"/><circle cx="136.7" cy="87.0" r="6.3" fill="#1c8dff" fill-opacity="0.88" stroke="#0b6fe0" stroke-width="0.9"/><circle cx="131.3" cy="91.5" r="6.3" fill="#1c8dff" fill-opacity="0.88" stroke="#0b6fe0" stroke-width="0.9"/><circle cx="149.5" cy="110.0" r="6.3" fill="#1c8dff" fill-opacity="0.88" stroke="#0b6fe0" stroke-width="0.9"/><circle cx="135.9" cy="85.1" r="6.3" fill="#1c8dff" fill-opacity="0.88" stroke="#0b6fe0" stroke-width="0.9"/><circle cx="129.0" cy="98.3" r="6.3" fill="#1c8dff" fill-opacity="0.88" stroke="#0b6fe0" stroke-width="0.9"/><circle cx="128.5" cy="85.3" r="6.3" fill="#1c8dff" fill-opacity="0.88" stroke="#0b6fe0" stroke-width="0.9"/><circle cx="126.9" cy="84.3" r="6.3" fill="#1c8dff" fill-opacity="0.88" stroke="#0b6fe0" stroke-width="0.9"/><circle cx="170.1" cy="96.6" r="6.3" fill="#1c8dff" fill-opacity="0.88" stroke="#0b6fe0" stroke-width="0.9"/><circle cx="157.6" cy="110.9" r="6.3" fill="#1c8dff" fill-opacity="0.88" stroke="#0b6fe0" stroke-width="0.9"/><circle cx="164.1" cy="96.5" r="6.3" fill="#1c8dff" fill-opacity="0.88" stroke="#0b6fe0" stroke-width="0.9"/><circle cx="122.3" cy="81.9" r="6.3" fill="#1c8dff" fill-opacity="0.88" stroke="#0b6fe0" stroke-width="0.9"/><circle cx="137.3" cy="99.7" r="6.3" fill="#1c8dff" fill-opacity="0.88" stroke="#0b6fe0" stroke-width="0.9"/><circle cx="130.6" cy="88.2" r="6.3" fill="#1c8dff" fill-opacity="0.88" stroke="#0b6fe0" stroke-width="0.9"/><circle cx="129.9" cy="101.4" r="6.3" fill="#1c8dff" fill-opacity="0.88" stroke="#0b6fe0" stroke-width="0.9"/><circle cx="131.1" cy="93.9" r="6.3" fill="#1c8dff" fill-opacity="0.88" stroke="#0b6fe0" stroke-width="0.9"/><circle cx="137.5" cy="95.6" r="6.3" fill="#1c8dff" fill-opacity="0.88" stroke="#0b6fe0" stroke-width="0.9"/><circle cx="147.4" cy="98.9" r="6.3" fill="#1c8dff" fill-opacity="0.88" stroke="#0b6fe0" stroke-width="0.9"/><circle cx="143.3" cy="83.3" r="6.3" fill="#1c8dff" fill-opacity="0.88" stroke="#0b6fe0" stroke-width="0.9"/><circle cx="125.3" cy="96.3" r="6.3" fill="#1c8dff" fill-opacity="0.88" stroke="#0b6fe0" stroke-width="0.9"/><circle cx="162.4" cy="100.0" r="6.3" fill="#1c8dff" fill-opacity="0.88" stroke="#0b6fe0" stroke-width="0.9"/><circle cx="135.6" cy="98.3" r="6.3" fill="#1c8dff" fill-opacity="0.88" stroke="#0b6fe0" stroke-width="0.9"/><circle cx="151.0" cy="110.3" r="6.3" fill="#1c8dff" fill-opacity="0.88" stroke="#0b6fe0" stroke-width="0.9"/><circle cx="130.4" cy="87.5" r="6.3" fill="#1c8dff" fill-opacity="0.88" stroke="#0b6fe0" stroke-width="0.9"/><circle cx="165.6" cy="97.9" r="6.3" fill="#1c8dff" fill-opacity="0.88" stroke="#0b6fe0" stroke-width="0.9"/><circle cx="151.4" cy="109.2" r="6.3" fill="#1c8dff" fill-opacity="0.88" stroke="#0b6fe0" stroke-width="0.9"/><circle cx="154.8" cy="97.8" r="6.3" fill="#1c8dff" fill-opacity="0.88" stroke="#0b6fe0" stroke-width="0.9"/><circle cx="148.1" cy="106.2" r="6.3" fill="#1c8dff" fill-opacity="0.88" stroke="#0b6fe0" stroke-width="0.9"/><circle cx="144.1" cy="99.0" r="6.3" fill="#1c8dff" fill-opacity="0.88" stroke="#0b6fe0" stroke-width="0.9"/><circle cx="121.9" cy="94.9" r="6.3" fill="#1c8dff" fill-opacity="0.88" stroke="#0b6fe0" stroke-width="0.9"/><circle cx="140.5" cy="96.9" r="6.3" fill="#1c8dff" fill-opacity="0.88" stroke="#0b6fe0" stroke-width="0.9"/><circle cx="124.6" cy="94.4" r="6.3" fill="#1c8dff" fill-opacity="0.88" stroke="#0b6fe0" stroke-width="0.9"/><circle cx="148.3" cy="90.3" r="6.3" fill="#1c8dff" fill-opacity="0.88" stroke="#0b6fe0" stroke-width="0.9"/><circle cx="126.9" cy="89.4" r="6.3" fill="#1c8dff" fill-opacity="0.88" stroke="#0b6fe0" stroke-width="0.9"/><circle cx="150.9" cy="94.8" r="6.3" fill="#1c8dff" fill-opacity="0.88" stroke="#0b6fe0" stroke-width="0.9"/><circle cx="155.6" cy="98.1" r="6.3" fill="#1c8dff" fill-opacity="0.88" stroke="#0b6fe0" stroke-width="0.9"/><circle cx="120.8" cy="87.0" r="6.3" fill="#1c8dff" fill-opacity="0.88" stroke="#0b6fe0" stroke-width="0.9"/><circle cx="152.0" cy="106.5" r="6.3" fill="#1c8dff" fill-opacity="0.88" stroke="#0b6fe0" stroke-width="0.9"/><circle cx="159.9" cy="94.2" r="6.3" fill="#1c8dff" fill-opacity="0.88" stroke="#0b6fe0" stroke-width="0.9"/><circle cx="156.3" cy="111.0" r="6.3" fill="#1c8dff" fill-opacity="0.88" stroke="#0b6fe0" stroke-width="0.9"/><circle cx="144.2" cy="90.3" r="6.3" fill="#1c8dff" fill-opacity="0.88" stroke="#0b6fe0" stroke-width="0.9"/><circle cx="149.1" cy="85.8" r="6.3" fill="#1c8dff" fill-opacity="0.88" stroke="#0b6fe0" stroke-width="0.9"/><circle cx="121.1" cy="82.3" r="6.3" fill="#1c8dff" fill-opacity="0.88" stroke="#0b6fe0" stroke-width="0.9"/><circle cx="134.7" cy="88.8" r="6.3" fill="#1c8dff" fill-opacity="0.88" stroke="#0b6fe0" stroke-width="0.9"/><circle cx="164.7" cy="88.1" r="6.3" fill="#1c8dff" fill-opacity="0.88" stroke="#0b6fe0" stroke-width="0.9"/><circle cx="162.9" cy="99.8" r="6.3" fill="#1c8dff" fill-opacity="0.88" stroke="#0b6fe0" stroke-width="0.9"/><circle cx="126.5" cy="96.4" r="6.3" fill="#1c8dff" fill-opacity="0.88" stroke="#0b6fe0" stroke-width="0.9"/><circle cx="168.7" cy="94.5" r="6.3" fill="#1c8dff" fill-opacity="0.88" stroke="#0b6fe0" stroke-width="0.9"/><circle cx="147.0" cy="112.5" r="6.3" fill="#1c8dff" fill-opacity="0.88" stroke="#0b6fe0" stroke-width="0.9"/><circle cx="140.1" cy="97.8" r="6.3" fill="#1c8dff" fill-opacity="0.88" stroke="#0b6fe0" stroke-width="0.9"/><circle cx="161.2" cy="103.6" r="6.3" fill="#1c8dff" fill-opacity="0.88" stroke="#0b6fe0" stroke-width="0.9"/><circle cx="140.9" cy="90.7" r="6.3" fill="#1c8dff" fill-opacity="0.88" stroke="#0b6fe0" stroke-width="0.9"/><circle cx="130.9" cy="82.4" r="6.3" fill="#1c8dff" fill-opacity="0.88" stroke="#0b6fe0" stroke-width="0.9"/><circle cx="132.7" cy="85.9" r="6.3" fill="#1c8dff" fill-opacity="0.88" stroke="#0b6fe0" stroke-width="0.9"/><circle cx="133.4" cy="95.7" r="6.3" fill="#1c8dff" fill-opacity="0.88" stroke="#0b6fe0" stroke-width="0.9"/><circle cx="124.3" cy="95.1" r="6.3" fill="#1c8dff" fill-opacity="0.88" stroke="#0b6fe0" stroke-width="0.9"/><circle cx="134.5" cy="91.1" r="6.3" fill="#1c8dff" fill-opacity="0.88" stroke="#0b6fe0" stroke-width="0.9"/><circle cx="145.6" cy="97.6" r="6.3" fill="#1c8dff" fill-opacity="0.88" stroke="#0b6fe0" stroke-width="0.9"/><circle cx="127.2" cy="97.7" r="6.3" fill="#1c8dff" fill-opacity="0.88" stroke="#0b6fe0" stroke-width="0.9"/><circle cx="119.8" cy="93.0" r="6.3" fill="#1c8dff" fill-opacity="0.88" stroke="#0b6fe0" stroke-width="0.9"/><circle cx="134.2" cy="85.5" r="6.3" fill="#1c8dff" fill-opacity="0.88" stroke="#0b6fe0" stroke-width="0.9"/><circle cx="153.0" cy="98.8" r="6.3" fill="#1c8dff" fill-opacity="0.88" stroke="#0b6fe0" stroke-width="0.9"/><circle cx="164.1" cy="104.6" r="6.3" fill="#1c8dff" fill-opacity="0.88" stroke="#0b6fe0" stroke-width="0.9"/><circle cx="139.9" cy="89.7" r="6.3" fill="#1c8dff" fill-opacity="0.88" stroke="#0b6fe0" stroke-width="0.9"/><circle cx="165.9" cy="113.7" r="6.3" fill="#1c8dff" fill-opacity="0.88" stroke="#0b6fe0" stroke-width="0.9"/><circle cx="162.8" cy="108.8" r="6.3" fill="#1c8dff" fill-opacity="0.88" stroke="#0b6fe0" stroke-width="0.9"/><circle cx="150.4" cy="112.3" r="6.3" fill="#1c8dff" fill-opacity="0.88" stroke="#0b6fe0" stroke-width="0.9"/><circle cx="145.0" cy="111.5" r="6.3" fill="#1c8dff" fill-opacity="0.88" stroke="#0b6fe0" stroke-width="0.9"/><circle cx="172.0" cy="104.2" r="6.3" fill="#1c8dff" fill-opacity="0.88" stroke="#0b6fe0" stroke-width="0.9"/><circle cx="174.4" cy="92.6" r="6.3" fill="#1c8dff" fill-opacity="0.88" stroke="#0b6fe0" stroke-width="0.9"/><circle cx="170.5" cy="88.7" r="6.3" fill="#1c8dff" fill-opacity="0.88" stroke="#0b6fe0" stroke-width="0.9"/><circle cx="120.2" cy="80.2" r="6.3" fill="#1c8dff" fill-opacity="0.88" stroke="#0b6fe0" stroke-width="0.9"/><circle cx="119.5" cy="96.4" r="6.3" fill="#1c8dff" fill-opacity="0.88" stroke="#0b6fe0" stroke-width="0.9"/><circle cx="124.1" cy="102.6" r="6.3" fill="#1c8dff" fill-opacity="0.88" stroke="#0b6fe0" stroke-width="0.9"/><circle cx="131.8" cy="104.2" r="6.3" fill="#1c8dff" fill-opacity="0.88" stroke="#0b6fe0" stroke-width="0.9"/><circle cx="139.6" cy="106.5" r="6.3" fill="#1c8dff" fill-opacity="0.88" stroke="#0b6fe0" stroke-width="0.9"/><circle cx="156.0" cy="114.0" r="6.3" fill="#1c8dff" fill-opacity="0.88" stroke="#0b6fe0" stroke-width="0.9"/><circle cx="160.0" cy="112.5" r="6.3" fill="#1c8dff" fill-opacity="0.88" stroke="#0b6fe0" stroke-width="0.9"/><circle cx="93.3" cy="59.8" r="6.2" fill="#1b2fa8" fill-opacity="0.95" stroke="#131f7a" stroke-width="0.9"/><circle cx="107.2" cy="55.0" r="6" fill="#4aa0f7" fill-opacity="0.85" stroke="#2c7de0" stroke-width="0.9"/><circle cx="193.4" cy="84.7" r="6" fill="#3f98f6" fill-opacity="0.85" stroke="#2377df" stroke-width="0.9"/><circle cx="179.0" cy="121.9" r="6.9" fill="#c9a017" fill-opacity="0.95" stroke="#a88408" stroke-width="0.9"/><circle cx="158.1" cy="128.9" r="6" fill="#3a8bf2" fill-opacity="0.85" stroke="#1f6bd6" stroke-width="0.9"/><circle cx="162.0" cy="130.5" r="6" fill="#3a8bf2" fill-opacity="0.85" stroke="#1f6bd6" stroke-width="0.9"/><circle cx="166.6" cy="132.0" r="6" fill="#3a8bf2" fill-opacity="0.85" stroke="#1f6bd6" stroke-width="0.9"/><circle cx="86.6" cy="120.1" r="7" fill="#1d9a36" fill-opacity="0.95" stroke="#147a28" stroke-width="0.9"/><circle cx="84.5" cy="118.8" r="7.1" fill="#1fa53a" fill-opacity="0.97" stroke="#14802a" stroke-width="0.9"/><circle cx="203.1" cy="165.2" r="6" fill="#e0963c" fill-opacity="0.9" stroke="#b97826" stroke-width="0.9"/><circle cx="188.0" cy="179.7" r="6" fill="#5b8fd8" fill-opacity="0.9" stroke="#2f62b0" stroke-width="0.9"/><circle cx="254.9" cy="95.8" r="4.5" fill="#c8a820" fill-opacity="0.95" stroke="#a88a10" stroke-width="0.9"/><circle cx="244.3" cy="72.6" r="6" fill="#1c8dff" fill-opacity="0.88" stroke="#0b6fe0" stroke-width="0.9"/><circle cx="247.0" cy="77.3" r="6" fill="#1c8dff" fill-opacity="0.88" stroke="#0b6fe0" stroke-width="0.9"/><circle cx="260.5" cy="70.5" r="6" fill="#1c8dff" fill-opacity="0.88" stroke="#0b6fe0" stroke-width="0.9"/><circle cx="258.5" cy="76.6" r="6" fill="#1c8dff" fill-opacity="0.88" stroke="#0b6fe0" stroke-width="0.9"/><circle cx="270.0" cy="77.3" r="6" fill="#1c8dff" fill-opacity="0.88" stroke="#0b6fe0" stroke-width="0.9"/><circle cx="263.2" cy="86.1" r="6" fill="#1c8dff" fill-opacity="0.88" stroke="#0b6fe0" stroke-width="0.9"/><circle cx="249.7" cy="88.8" r="6" fill="#1c8dff" fill-opacity="0.88" stroke="#0b6fe0" stroke-width="0.9"/><circle cx="240.9" cy="90.8" r="6" fill="#1c8dff" fill-opacity="0.88" stroke="#0b6fe0" stroke-width="0.9"/><circle cx="263.9" cy="95.6" r="6" fill="#1c8dff" fill-opacity="0.88" stroke="#0b6fe0" stroke-width="0.9"/><circle cx="240.2" cy="76.0" r="6" fill="#1c8dff" fill-opacity="0.88" stroke="#0b6fe0" stroke-width="0.9"/><circle cx="254.5" cy="84.7" r="6" fill="#1c8dff" fill-opacity="0.88" stroke="#0b6fe0" stroke-width="0.9"/><circle cx="252.0" cy="73.5" r="6" fill="#1c8dff" fill-opacity="0.88" stroke="#0b6fe0" stroke-width="0.9"/><circle cx="266.0" cy="81.5" r="6" fill="#1c8dff" fill-opacity="0.88" stroke="#0b6fe0" stroke-width="0.9"/><circle cx="245.0" cy="83.5" r="6" fill="#1c8dff" fill-opacity="0.88" stroke="#0b6fe0" stroke-width="0.9"/><circle cx="257.0" cy="90.5" r="6" fill="#1c8dff" fill-opacity="0.88" stroke="#0b6fe0" stroke-width="0.9"/><circle cx="279.5" cy="63.1" r="6" fill="#2c8bf6" fill-opacity="0.9" stroke="#1268d8" stroke-width="0.9"/><circle cx="242.0" cy="99.5" r="6.5" fill="#3fd0c8" fill-opacity="0.92" stroke="#22b0a8" stroke-width="0.9"/><circle cx="382.5" cy="100.0" r="5.8" fill="#a99be8" fill-opacity="0.9" stroke="#8a78d0" stroke-width="0.9"/><circle cx="379.1" cy="99.7" r="5.8" fill="#f06a6a" fill-opacity="0.92" stroke="#d04848" stroke-width="0.9"/><circle cx="392.7" cy="101.6" r="6" fill="#2c85f5" fill-opacity="0.9" stroke="#0e63cf" stroke-width="0.9"/><circle cx="380.5" cy="112.6" r="6" fill="#2c85f5" fill-opacity="0.9" stroke="#0e63cf" stroke-width="0.9"/><circle cx="374.9" cy="129.6" r="5.8" fill="#bba8f0" fill-opacity="0.92" stroke="#9a86d8" stroke-width="0.9"/><circle cx="398.1" cy="127.1" r="5.8" fill="#3c8a8c" fill-opacity="0.95" stroke="#2a6e70" stroke-width="0.9"/><circle cx="406.5" cy="171.6" r="6" fill="#2c8bf6" fill-opacity="0.85" stroke="#1268d8" stroke-width="0.9"/><circle cx="404.6" cy="175.5" r="6" fill="#2c8bf6" fill-opacity="0.85" stroke="#1268d8" stroke-width="0.9"/><circle cx="396.8" cy="183.6" r="6" fill="#2c8bf6" fill-opacity="0.85" stroke="#1268d8" stroke-width="0.9"/><circle cx="401.7" cy="183.6" r="6" fill="#2c8bf6" fill-opacity="0.85" stroke="#1268d8" stroke-width="0.9"/><circle cx="404.6" cy="183.2" r="6" fill="#2c8bf6" fill-opacity="0.85" stroke="#1268d8" stroke-width="0.9"/><circle cx="430.1" cy="181.8" r="6" fill="#e58ad0" fill-opacity="0.92" stroke="#c868b0" stroke-width="0.9"/><circle cx="428.8" cy="188.6" r="6" fill="#3a8bf2" fill-opacity="0.88" stroke="#1f6bd6" stroke-width="0.9"/>
<circle cx="459.8" cy="16.9" r="11.5" fill="#fff" stroke="#3a3a3a" stroke-width="1.1"/>
<path d="M453.8 16.9h12M459.8 10.9v12" stroke="#333" stroke-width="1.3" fill="none"/>
<circle cx="459.8" cy="57.9" r="12" fill="#fff" fill-opacity="0.92"/>
<path d="M453.8 57.9h12" stroke="#c4c4c4" stroke-width="1.3" fill="none"/><rect x="3.7" y="229.4" width="3" height="3" fill="#f25022"/><rect x="7.2" y="229.4" width="3" height="3" fill="#7fba00"/><rect x="3.7" y="232.9" width="3" height="3" fill="#00a4ef"/><rect x="7.2" y="232.9" width="3" height="3" fill="#ffb900"/>
<text x="13.0" y="235.3" font-size="5.8" font-weight="normal" fill="#6b6b6b" textLength="37" lengthAdjust="spacingAndGlyphs" stroke="#fff" stroke-opacity="0.75" stroke-width="1.6" paint-order="stroke" stroke-linejoin="round" >Microsoft Bing</text><text x="260.9" y="237.3" font-size="5.9" font-weight="normal" fill="#4f4f4f" textLength="216" lengthAdjust="spacingAndGlyphs" stroke="#fff" stroke-opacity="0.75" stroke-width="1.6" paint-order="stroke" stroke-linejoin="round" >© 2025 TomTom, © 2025 Microsoft Corporation, © <tspan text-decoration="underline">OpenStreetMap</tspan>  <tspan text-decoration="underline" font-style="italic">Terms</tspan></text>
</svg>
<div class="abs" style="left:685px;top:85.4px;width:244px;height:216.6px;box-sizing:border-box;border:1px solid #8e8e8e;border-radius:5px;background:rgba(0,0,0,0.62);overflow:hidden"><div style="height:19.6px;background:#034e95"></div></div>
<div class="abs" style="left:160.5px;top:309.5px;width:768.2px;height:201.5px;box-sizing:border-box;border:1px solid #a0a0a0;border-radius:6px;background:rgba(0,0,0,0.85)"></div>
<div class="abs" style="left:167px;top:315.3px;width:649.2px;height:20.1px;background:#034e95"></div>
<div class="abs" style="left:167px;top:335.4px;width:649.2px;height:156px;background:#fff"></div>
<svg id="ov" width="936" height="517" viewBox="0 0 936 517"><defs><clipPath id="tclip"><rect x="167" y="315" width="649.2" height="176.4"/></clipPath></defs><polyline points="104.5,227.5 109.3,232.6 114.2,227.5" fill="none" stroke="#fff" stroke-width="1.3"/><polyline points="104.5,288 109.3,293 114.2,288" fill="none" stroke="#fff" stroke-width="1.3"/><defs><linearGradient id="lwg" x1="0" y1="0" x2="0" y2="1"><stop offset="0" stop-color="#7d9cc0"/><stop offset="1" stop-color="#6285af"/></linearGradient></defs><rect x="16.4" y="432" width="103.9" height="20.6" fill="url(#lwg)"/><rect x="16.4" y="432.9" width="103.9" height="0.9" fill="#d5e0ee"/><rect x="16.4" y="450.9" width="103.9" height="0.9" fill="#d5e0ee"/><polygon points="21.5,437.3 36.8,437.3 35.2,440.1 25.2,440.1" fill="#eef2f8"/><polygon points="26.6,440.7 34.9,440.7 33.6,443.3 29.8,443.3" fill="#eef2f8"/><polygon points="30.8,443.9 33.3,443.9 32.4,446.3 32.0,446.3" fill="#eef2f8"/><polygon points="118.3,437.3 103.0,437.3 104.6,440.1 114.6,440.1" fill="#eef2f8"/><polygon points="113.2,440.7 104.9,440.7 106.2,443.3 110.0,443.3" fill="#eef2f8"/><polygon points="109.0,443.9 106.5,443.9 107.4,446.3 107.8,446.3" fill="#eef2f8"/><rect x="16.2" y="494.7" width="104.7" height="13.8" fill="#fbfcfe"/><rect x="87.6" y="498" width="32" height="8" rx="0.8" fill="#f6c31c"/><path d="M18 497 L23 505.3 L28 497 L26.3 497 L23 502.6 L19.7 497Z M20.6 497.2 L23 501 L25.4 497.2 L24.3 497.2 L23 499.3 L21.7 497.2Z" fill="#24357a"/><circle cx="91" cy="502" r="1" fill="#b88600"/><defs><clipPath id="bclip"><rect x="440" y="0" width="492.4" height="14"/></clipPath></defs><line x1="727" y1="138.8" x2="924" y2="138.8" stroke="#a6a6a6" stroke-width="1.2" stroke-dasharray="1.2 2.4"/><line x1="727" y1="193" x2="924" y2="193" stroke="#a6a6a6" stroke-width="1.2" stroke-dasharray="1.2 2.4"/><line x1="727" y1="245.5" x2="924" y2="245.5" stroke="#a6a6a6" stroke-width="1.2" stroke-dasharray="1.2 2.4"/><rect x="735.0" y="134.2" width="11.3" height="111.3" fill="#1391fd"/><rect x="750.6" y="163.8" width="11.3" height="81.7" fill="#1391fd"/><rect x="766.2" y="184.7" width="11.3" height="60.8" fill="#1391fd"/><rect x="781.9" y="195.3" width="11.3" height="50.2" fill="#1391fd"/><rect x="797.5" y="203.7" width="11.3" height="41.8" fill="#1391fd"/><rect x="813.1" y="221.8" width="11.3" height="23.7" fill="#1391fd"/><rect x="828.7" y="225.5" width="11.3" height="20.0" fill="#1391fd"/><rect x="844.3" y="225.5" width="11.3" height="20.0" fill="#1391fd"/><rect x="860.0" y="225.5" width="11.3" height="20.0" fill="#1391fd"/><rect x="875.6" y="229.2" width="11.3" height="16.3" fill="#1391fd"/><rect x="891.2" y="239.5" width="11.3" height="6.0" fill="#1391fd"/><rect x="906.8" y="241.8" width="11.3" height="3.7" fill="#1391fd"/><rect x="728" y="292" width="196.4" height="7" fill="#7d7d7d"/><rect x="728" y="292" width="168.5" height="7" fill="#999" stroke="#bdbdbd" stroke-width="0.7"/><g clip-path="url(#tclip)"><rect x="167" y="351.1" width="649.2" height="14.45" fill="#ececec"/><rect x="167" y="380.0" width="649.2" height="14.45" fill="#ececec"/><rect x="167" y="408.9" width="649.2" height="14.45" fill="#ececec"/><rect x="167" y="437.8" width="649.2" height="14.45" fill="#ececec"/><rect x="167" y="466.6" width="649.2" height="14.45" fill="#ececec"/><line x1="167" y1="351.1" x2="816.2" y2="351.1" stroke="#d6d6d6" stroke-width="0.6"/><line x1="167" y1="365.5" x2="816.2" y2="365.5" stroke="#d6d6d6" stroke-width="0.6"/><line x1="167" y1="380.0" x2="816.2" y2="380.0" stroke="#d6d6d6" stroke-width="0.6"/><line x1="167" y1="394.4" x2="816.2" y2="394.4" stroke="#b9b9b9" stroke-width="0.9"/><line x1="167" y1="408.9" x2="816.2" y2="408.9" stroke="#b9b9b9" stroke-width="0.9"/><line x1="167" y1="423.3" x2="816.2" y2="423.3" stroke="#b9b9b9" stroke-width="0.9"/><line x1="167" y1="437.8" x2="816.2" y2="437.8" stroke="#d6d6d6" stroke-width="0.6"/><line x1="167" y1="452.2" x2="816.2" y2="452.2" stroke="#d6d6d6" stroke-width="0.6"/><line x1="167" y1="466.6" x2="816.2" y2="466.6" stroke="#d6d6d6" stroke-width="0.6"/><line x1="167" y1="481.1" x2="816.2" y2="481.1" stroke="#d6d6d6" stroke-width="0.6"/><line x1="167" y1="495.6" x2="816.2" y2="495.6" stroke="#d6d6d6" stroke-width="0.6"/><line x1="225.5" y1="315.3" x2="225.5" y2="335.4" stroke="#0a3566" stroke-width="0.9" stroke-opacity="0.8"/><line x1="225.5" y1="335.4" x2="225.5" y2="491.4" stroke="#c4c4c4" stroke-width="0.8" stroke-opacity="0.7"/><line x1="283.5" y1="315.3" x2="283.5" y2="335.4" stroke="#0a3566" stroke-width="0.9" stroke-opacity="0.8"/><line x1="283.5" y1="335.4" x2="283.5" y2="491.4" stroke="#c4c4c4" stroke-width="0.8" stroke-opacity="0.7"/><line x1="366" y1="315.3" x2="366" y2="335.4" stroke="#0a3566" stroke-width="0.9" stroke-opacity="0.8"/><line x1="366" y1="335.4" x2="366" y2="491.4" stroke="#c4c4c4" stroke-width="0.8" stroke-opacity="0.7"/><line x1="448.7" y1="315.3" x2="448.7" y2="335.4" stroke="#0a3566" stroke-width="0.9" stroke-opacity="0.8"/><line x1="448.7" y1="335.4" x2="448.7" y2="491.4" stroke="#c4c4c4" stroke-width="0.8" stroke-opacity="0.7"/><line x1="526.7" y1="315.3" x2="526.7" y2="335.4" stroke="#0a3566" stroke-width="0.9" stroke-opacity="0.8"/><line x1="526.7" y1="335.4" x2="526.7" y2="491.4" stroke="#c4c4c4" stroke-width="0.8" stroke-opacity="0.7"/><line x1="577.2" y1="315.3" x2="577.2" y2="335.4" stroke="#0a3566" stroke-width="0.9" stroke-opacity="0.8"/><line x1="577.2" y1="335.4" x2="577.2" y2="491.4" stroke="#c4c4c4" stroke-width="0.8" stroke-opacity="0.7"/><line x1="650.8" y1="315.3" x2="650.8" y2="335.4" stroke="#0a3566" stroke-width="0.9" stroke-opacity="0.8"/><line x1="650.8" y1="335.4" x2="650.8" y2="491.4" stroke="#c4c4c4" stroke-width="0.8" stroke-opacity="0.7"/><line x1="735.4" y1="315.3" x2="735.4" y2="335.4" stroke="#0a3566" stroke-width="0.9" stroke-opacity="0.8"/><line x1="735.4" y1="335.4" x2="735.4" y2="491.4" stroke="#c4c4c4" stroke-width="0.8" stroke-opacity="0.7"/><rect x="169.3" y="339.6" width="105.7" height="152" fill="#e9e9e9"/><rect x="653.4" y="338" width="80.3" height="154" fill="#e9e9e9"/></g><polygon points="370.5,332.2 373.6,328.8 376.7,332.2" fill="#fff"/><rect x="916.7" y="314.8" width="5.6" height="191.5" rx="2.8" fill="#8c8c8c"/><text x="23.2" y="40.5" font-size="9.6" font-weight="bold" fill="#fff" textLength="91.3" lengthAdjust="spacingAndGlyphs" text-decoration="underline"># of Airmen on Leave</text><text x="51.5" y="66.2" font-size="17" font-weight="bold" fill="#fff" textLength="36" lengthAdjust="spacingAndGlyphs" >1727</text><text x="39" y="97.5" font-size="9.6" font-weight="bold" fill="#fff" textLength="60.1" lengthAdjust="spacingAndGlyphs" text-decoration="underline"># of Countries</text><text x="59.9" y="123" font-size="17" font-weight="bold" fill="#fff" textLength="17.9" lengthAdjust="spacingAndGlyphs" >20</text><text x="43" y="154.4" font-size="9.6" font-weight="bold" fill="#fff" textLength="51.7" lengthAdjust="spacingAndGlyphs" text-decoration="underline">Use or Lose</text><text x="59.9" y="179.5" font-size="17" font-weight="bold" fill="#fff" textLength="17.9" lengthAdjust="spacingAndGlyphs" >60</text><text x="51.5" y="209.7" font-size="9.6" font-weight="bold" fill="#fff" textLength="34.4" lengthAdjust="spacingAndGlyphs" text-decoration="underline">Country</text><text x="60.8" y="270.1" font-size="9.6" font-weight="bold" fill="#fff" textLength="17" lengthAdjust="spacingAndGlyphs" text-decoration="underline">City</text><text x="22" y="233.6" font-size="9" font-weight="bold" fill="#fff" textLength="11.2" lengthAdjust="spacingAndGlyphs" >All</text><text x="22.6" y="293.8" font-size="9" font-weight="bold" fill="#fff" textLength="11.2" lengthAdjust="spacingAndGlyphs" >All</text><text x="24.8" y="484.6" font-size="9.6" font-weight="bold" fill="#fff" textLength="88.4" lengthAdjust="spacingAndGlyphs" >Submit a CSP Case</text><text x="36.6" y="446.2" font-size="12.3" font-weight="bold" fill="#f6f8fc" textLength="66.4" lengthAdjust="spacingAndGlyphs" >LEAVEWEB</text><text x="25.4" y="449.9" font-size="2.7" font-weight="bold" fill="#e6edf6" textLength="88.4" lengthAdjust="spacingAndGlyphs" >Air Force Personnel Leave Request and Approval System</text><text x="29.9" y="500.5" font-size="3.5" font-weight="bold" fill="#1c2f6e" textLength="33.9" lengthAdjust="spacingAndGlyphs" >U.S. AIR FORCE</text><text x="29.9" y="504.9" font-size="3.4" font-weight="bold" fill="#3a3a3a" textLength="48" lengthAdjust="spacingAndGlyphs" >CUSTOMER SERVICE PORTAL</text><text x="93.5" y="503.3" font-size="3" font-weight="bold" fill="#9a7000" textLength="22" lengthAdjust="spacingAndGlyphs" >Customer Login</text><text x="449.9" y="9.7" font-size="7.67" font-weight="bold" fill="#fff" font-family='"Liberation Mono", "DejaVu Sans Mono", monospace' clip-path="url(#bclip)">Controlled Unclassified Information (CUI): Information in this system is covered by the Privacy Act of 1974</text><text x="691.3" y="99.8" font-size="11.3" font-weight="bold" fill="#fff" textLength="140" lengthAdjust="spacingAndGlyphs" >Airmen on Leave by Rank</text><text x="0" y="0" font-size="8.8" font-weight="bold" fill="#e8e8e8" text-anchor="end" transform="translate(743.6 249.0) rotate(-90)">MSgt</text><text x="0" y="0" font-size="8.8" font-weight="bold" fill="#e8e8e8" text-anchor="end" transform="translate(759.3 249.0) rotate(-90)">SrA</text><text x="0" y="0" font-size="8.8" font-weight="bold" fill="#e8e8e8" text-anchor="end" transform="translate(774.9 249.0) rotate(-90)">SSgt</text><text x="0" y="0" font-size="8.8" font-weight="bold" fill="#e8e8e8" text-anchor="end" transform="translate(790.5 249.0) rotate(-90)">TSgt</text><text x="0" y="0" font-size="8.8" font-weight="bold" fill="#e8e8e8" text-anchor="end" transform="translate(806.1 249.0) rotate(-90)">SMS...</text><text x="0" y="0" font-size="8.8" font-weight="bold" fill="#e8e8e8" text-anchor="end" transform="translate(821.8 249.0) rotate(-90)">CMS...</text><text x="0" y="0" font-size="8.8" font-weight="bold" fill="#e8e8e8" text-anchor="end" transform="translate(837.4 249.0) rotate(-90)">Maj</text><text x="0" y="0" font-size="8.8" font-weight="bold" fill="#e8e8e8" text-anchor="end" transform="translate(853.0 249.0) rotate(-90)">Capt</text><text x="0" y="0" font-size="8.8" font-weight="bold" fill="#e8e8e8" text-anchor="end" transform="translate(868.6 249.0) rotate(-90)">Lt Col</text><text x="0" y="0" font-size="8.8" font-weight="bold" fill="#e8e8e8" text-anchor="end" transform="translate(884.2 249.0) rotate(-90)">A1C</text><text x="0" y="0" font-size="8.8" font-weight="bold" fill="#e8e8e8" text-anchor="end" transform="translate(899.9 249.0) rotate(-90)">Amn</text><text x="0" y="0" font-size="8.8" font-weight="bold" fill="#e8e8e8" text-anchor="end" transform="translate(915.5 249.0) rotate(-90)">Col</text><text x="721.5" y="141.6" font-size="8" font-weight="bold" fill="#e8e8e8" text-anchor="end" textLength="15" lengthAdjust="spacingAndGlyphs" >400</text><text x="721.5" y="195.8" font-size="8" font-weight="bold" fill="#e8e8e8" text-anchor="end" textLength="15" lengthAdjust="spacingAndGlyphs" >200</text><text x="721.5" y="248.3" font-size="8" font-weight="bold" fill="#e8e8e8" text-anchor="end" >0</text><text x="0" y="0" font-size="9.8" font-weight="bold" fill="#fff" text-anchor="middle" textLength="67" lengthAdjust="spacingAndGlyphs" transform="translate(700.3 177.7) rotate(-90)">Total on Leave</text><text x="825.5" y="289.5" font-size="9.5" font-weight="bold" fill="#fff" text-anchor="middle" textLength="24" lengthAdjust="spacingAndGlyphs" >Rank</text><text x="170.6" y="325.8" font-size="9.4" font-weight="bold" fill="#fff" textLength="46.4" lengthAdjust="spacingAndGlyphs" >First Name</text><text x="228.8" y="325.8" font-size="9.4" font-weight="bold" fill="#fff" textLength="45.1" lengthAdjust="spacingAndGlyphs" >Last Name</text><text x="287" y="325.8" font-size="9.4" font-weight="bold" fill="#fff" textLength="75.3" lengthAdjust="spacingAndGlyphs" >First Day of Leave</text><text x="370.3" y="325.8" font-size="9.4" font-weight="bold" fill="#fff" textLength="74" lengthAdjust="spacingAndGlyphs" >Last Day of Leave</text><text x="452.2" y="325.8" font-size="9.4" font-weight="bold" fill="#fff" textLength="70.1" lengthAdjust="spacingAndGlyphs" >Number of Days</text><text x="530.2" y="325.8" font-size="9.4" font-weight="bold" fill="#fff" textLength="29.3" lengthAdjust="spacingAndGlyphs" >Auth #</text><text x="581" y="325.8" font-size="9.4" font-weight="bold" fill="#fff" textLength="20.3" lengthAdjust="spacingAndGlyphs" >Type</text><text x="653.4" y="325.8" font-size="9.4" font-weight="bold" fill="#fff" textLength="77" lengthAdjust="spacingAndGlyphs" >Emergency Phone</text><text x="738.8" y="325.8" font-size="9.4" font-weight="bold" fill="#fff" textLength="52.9" lengthAdjust="spacingAndGlyphs" >Leave Status</text><g clip-path="url(#tclip)"><text x="287.1" y="346.90000000000003" font-size="9.8" font-weight="normal" fill="#4a4a4a" textLength="39.4" lengthAdjust="spacingAndGlyphs" >09/16/24</text><text x="370.3" y="346.90000000000003" font-size="9.8" font-weight="normal" fill="#4a4a4a" textLength="39.4" lengthAdjust="spacingAndGlyphs" >01/28/25</text><text x="496.0" y="346.90000000000003" font-size="9.8" font-weight="normal" fill="#4a4a4a" textLength="27.6" lengthAdjust="spacingAndGlyphs" >135.00</text><text x="530.2" y="346.90000000000003" font-size="9.8" font-weight="normal" fill="#4a4a4a" textLength="39" lengthAdjust="spacingAndGlyphs" >GC14298</text><text x="581" y="346.90000000000003" font-size="9.8" font-weight="normal" fill="#4a4a4a" textLength="58.8" lengthAdjust="spacingAndGlyphs" >T - Permissive</text><text x="738.8" y="346.90000000000003" font-size="9.8" font-weight="normal" fill="#4a4a4a" textLength="46.5" lengthAdjust="spacingAndGlyphs" >Authorized</text><text x="287.1" y="361.35" font-size="9.8" font-weight="normal" fill="#4a4a4a" textLength="39.4" lengthAdjust="spacingAndGlyphs" >10/21/24</text><text x="370.3" y="361.35" font-size="9.8" font-weight="normal" fill="#4a4a4a" textLength="39.4" lengthAdjust="spacingAndGlyphs" >01/28/25</text><text x="496.0" y="361.35" font-size="9.8" font-weight="normal" fill="#4a4a4a" textLength="27.6" lengthAdjust="spacingAndGlyphs" >100.00</text><text x="530.2" y="361.35" font-size="9.8" font-weight="normal" fill="#4a4a4a" textLength="39" lengthAdjust="spacingAndGlyphs" >HJ30880</text><text x="581" y="361.35" font-size="9.8" font-weight="normal" fill="#4a4a4a" textLength="58.8" lengthAdjust="spacingAndGlyphs" >T - Permissive</text><text x="738.8" y="361.35" font-size="9.8" font-weight="normal" fill="#4a4a4a" textLength="46.5" lengthAdjust="spacingAndGlyphs" >Authorized</text><text x="287.1" y="375.8" font-size="9.8" font-weight="normal" fill="#4a4a4a" textLength="39.4" lengthAdjust="spacingAndGlyphs" >11/30/24</text><text x="370.3" y="375.8" font-size="9.8" font-weight="normal" fill="#4a4a4a" textLength="39.4" lengthAdjust="spacingAndGlyphs" >01/28/25</text><text x="500.6" y="375.8" font-size="9.8" font-weight="normal" fill="#4a4a4a" textLength="23" lengthAdjust="spacingAndGlyphs" >60.00</text><text x="530.2" y="375.8" font-size="9.8" font-weight="normal" fill="#4a4a4a" textLength="39" lengthAdjust="spacingAndGlyphs" >TL06989</text><text x="581" y="375.8" font-size="9.8" font-weight="normal" fill="#4a4a4a" textLength="50.4" lengthAdjust="spacingAndGlyphs" >P - Terminal</text><text x="738.8" y="375.8" font-size="9.8" font-weight="normal" fill="#4a4a4a" textLength="71.9" lengthAdjust="spacingAndGlyphs" >Return Approved</text><text x="287.1" y="390.25000000000006" font-size="9.8" font-weight="normal" fill="#4a4a4a" textLength="39.4" lengthAdjust="spacingAndGlyphs" >01/28/25</text><text x="370.3" y="390.25000000000006" font-size="9.8" font-weight="normal" fill="#4a4a4a" textLength="39.4" lengthAdjust="spacingAndGlyphs" >01/28/25</text><text x="505.6" y="390.25000000000006" font-size="9.8" font-weight="normal" fill="#4a4a4a" textLength="18" lengthAdjust="spacingAndGlyphs" >1.00</text><text x="530.2" y="390.25000000000006" font-size="9.8" font-weight="normal" fill="#4a4a4a" textLength="39" lengthAdjust="spacingAndGlyphs" >TL04146</text><text x="581" y="390.25000000000006" font-size="9.8" font-weight="normal" fill="#4a4a4a" textLength="50.4" lengthAdjust="spacingAndGlyphs" >P - Terminal</text><text x="738.8" y="390.25000000000006" font-size="9.8" font-weight="normal" fill="#4a4a4a" textLength="71.9" lengthAdjust="spacingAndGlyphs" >Return Approved</text><text x="287.1" y="404.70000000000005" font-size="9.8" font-weight="normal" fill="#4a4a4a" textLength="39.4" lengthAdjust="spacingAndGlyphs" >11/06/24</text><text x="370.3" y="404.70000000000005" font-size="9.8" font-weight="normal" fill="#4a4a4a" textLength="39.4" lengthAdjust="spacingAndGlyphs" >01/28/25</text><text x="500.6" y="404.70000000000005" font-size="9.8" font-weight="normal" fill="#4a4a4a" textLength="23" lengthAdjust="spacingAndGlyphs" >84.00</text><text x="530.2" y="404.70000000000005" font-size="9.8" font-weight="normal" fill="#4a4a4a" textLength="39" lengthAdjust="spacingAndGlyphs" >GC00611</text><text x="581" y="404.70000000000005" font-size="9.8" font-weight="normal" fill="#4a4a4a" textLength="58.8" lengthAdjust="spacingAndGlyphs" >T - Permissive</text><text x="738.8" y="404.70000000000005" font-size="9.8" font-weight="normal" fill="#4a4a4a" textLength="46.5" lengthAdjust="spacingAndGlyphs" >Authorized</text><text x="287.1" y="419.15000000000003" font-size="9.8" font-weight="normal" fill="#4a4a4a" textLength="39.4" lengthAdjust="spacingAndGlyphs" >01/28/25</text><text x="370.3" y="419.15000000000003" font-size="9.8" font-weight="normal" fill="#4a4a4a" textLength="39.4" lengthAdjust="spacingAndGlyphs" >01/28/25</text><text x="505.6" y="419.15000000000003" font-size="9.8" font-weight="normal" fill="#4a4a4a" textLength="18" lengthAdjust="spacingAndGlyphs" >1.00</text><text x="530.2" y="419.15000000000003" font-size="9.8" font-weight="normal" fill="#4a4a4a" textLength="39" lengthAdjust="spacingAndGlyphs" >TL01792</text><text x="581" y="419.15000000000003" font-size="9.8" font-weight="normal" fill="#4a4a4a" textLength="50.4" lengthAdjust="spacingAndGlyphs" >P - Terminal</text><text x="738.8" y="419.15000000000003" font-size="9.8" font-weight="normal" fill="#4a4a4a" textLength="71.9" lengthAdjust="spacingAndGlyphs" >Return Approved</text><text x="287.1" y="433.6" font-size="9.8" font-weight="normal" fill="#4a4a4a" textLength="39.4" lengthAdjust="spacingAndGlyphs" >09/21/24</text><text x="370.3" y="433.6" font-size="9.8" font-weight="normal" fill="#4a4a4a" textLength="39.4" lengthAdjust="spacingAndGlyphs" >01/28/25</text><text x="496.0" y="433.6" font-size="9.8" font-weight="normal" fill="#4a4a4a" textLength="27.6" lengthAdjust="spacingAndGlyphs" >130.00</text><text x="530.2" y="433.6" font-size="9.8" font-weight="normal" fill="#4a4a4a" textLength="39" lengthAdjust="spacingAndGlyphs" >FS46303</text><text x="581" y="433.6" font-size="9.8" font-weight="normal" fill="#4a4a4a" textLength="58.8" lengthAdjust="spacingAndGlyphs" >T - Permissive</text><text x="738.8" y="433.6" font-size="9.8" font-weight="normal" fill="#4a4a4a" textLength="46.5" lengthAdjust="spacingAndGlyphs" >Authorized</text><text x="287.1" y="448.05" font-size="9.8" font-weight="normal" fill="#4a4a4a" textLength="39.4" lengthAdjust="spacingAndGlyphs" >01/21/25</text><text x="370.3" y="448.05" font-size="9.8" font-weight="normal" fill="#4a4a4a" textLength="39.4" lengthAdjust="spacingAndGlyphs" >01/28/25</text><text x="505.6" y="448.05" font-size="9.8" font-weight="normal" fill="#4a4a4a" textLength="18" lengthAdjust="spacingAndGlyphs" >8.00</text><text x="530.2" y="448.05" font-size="9.8" font-weight="normal" fill="#4a4a4a" textLength="39" lengthAdjust="spacingAndGlyphs" >BH18839</text><text x="581" y="448.05" font-size="9.8" font-weight="normal" fill="#4a4a4a" textLength="58.8" lengthAdjust="spacingAndGlyphs" >T - Permissive</text><text x="738.8" y="448.05" font-size="9.8" font-weight="normal" fill="#4a4a4a" textLength="46.5" lengthAdjust="spacingAndGlyphs" >Authorized</text><text x="287.1" y="462.50000000000006" font-size="9.8" font-weight="normal" fill="#4a4a4a" textLength="39.4" lengthAdjust="spacingAndGlyphs" >11/20/24</text><text x="370.3" y="462.50000000000006" font-size="9.8" font-weight="normal" fill="#4a4a4a" textLength="39.4" lengthAdjust="spacingAndGlyphs" >01/28/25</text><text x="500.6" y="462.50000000000006" font-size="9.8" font-weight="normal" fill="#4a4a4a" textLength="23" lengthAdjust="spacingAndGlyphs" >70.00</text><text x="530.2" y="462.50000000000006" font-size="9.8" font-weight="normal" fill="#4a4a4a" textLength="39" lengthAdjust="spacingAndGlyphs" >TL02506</text><text x="581" y="462.50000000000006" font-size="9.8" font-weight="normal" fill="#4a4a4a" textLength="50.4" lengthAdjust="spacingAndGlyphs" >P - Terminal</text><text x="738.8" y="462.50000000000006" font-size="9.8" font-weight="normal" fill="#4a4a4a" textLength="71.9" lengthAdjust="spacingAndGlyphs" >Return Approved</text><text x="287.1" y="476.95" font-size="9.8" font-weight="normal" fill="#4a4a4a" textLength="39.4" lengthAdjust="spacingAndGlyphs" >11/22/24</text><text x="370.3" y="476.95" font-size="9.8" font-weight="normal" fill="#4a4a4a" textLength="39.4" lengthAdjust="spacingAndGlyphs" >01/28/25</text><text x="500.6" y="476.95" font-size="9.8" font-weight="normal" fill="#4a4a4a" textLength="23" lengthAdjust="spacingAndGlyphs" >68.00</text><text x="530.2" y="476.95" font-size="9.8" font-weight="normal" fill="#4a4a4a" textLength="39" lengthAdjust="spacingAndGlyphs" >TL04876</text><text x="581" y="476.95" font-size="9.8" font-weight="normal" fill="#4a4a4a" textLength="50.4" lengthAdjust="spacingAndGlyphs" >P - Terminal</text><text x="738.8" y="476.95" font-size="9.8" font-weight="normal" fill="#4a4a4a" textLength="71.9" lengthAdjust="spacingAndGlyphs" >Return Approved</text><text x="287.1" y="491.40000000000003" font-size="9.8" font-weight="normal" fill="#4a4a4a" textLength="39.4" lengthAdjust="spacingAndGlyphs" >01/27/25</text><text x="370.3" y="491.40000000000003" font-size="9.8" font-weight="normal" fill="#4a4a4a" textLength="39.4" lengthAdjust="spacingAndGlyphs" >01/28/25</text><text x="505.6" y="491.40000000000003" font-size="9.8" font-weight="normal" fill="#4a4a4a" textLength="18" lengthAdjust="spacingAndGlyphs" >2.00</text><text x="530.2" y="491.40000000000003" font-size="9.8" font-weight="normal" fill="#4a4a4a" textLength="39" lengthAdjust="spacingAndGlyphs" >WZ01429</text><text x="581" y="491.40000000000003" font-size="9.8" font-weight="normal" fill="#4a4a4a" textLength="52" lengthAdjust="spacingAndGlyphs" >A - Ordinary</text><text x="738.8" y="491.40000000000003" font-size="9.8" font-weight="normal" fill="#4a4a4a" textLength="46.5" lengthAdjust="spacingAndGlyphs" >Authorized</text></g><text x="170.6" y="503.2" font-size="9.2" font-weight="bold" fill="#242424" >Total</text><text x="523.6" y="503.2" font-size="9.2" font-weight="bold" fill="#242424" text-anchor="end" >171,591.00</text></svg>
</body></html>
